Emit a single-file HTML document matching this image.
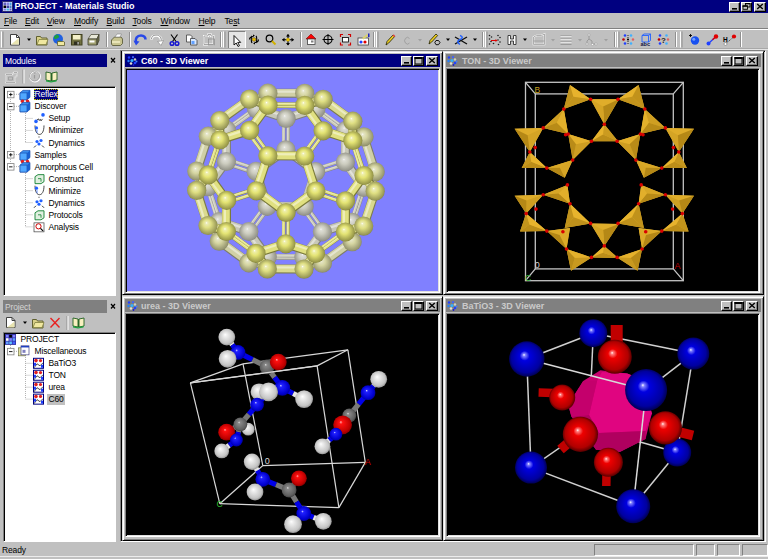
<!DOCTYPE html>
<html><head><meta charset="utf-8">
<style>
*{margin:0;padding:0;box-sizing:border-box}
html,body{width:768px;height:559px;overflow:hidden;background:#c0c0c0;font-family:"Liberation Sans",sans-serif;font-size:8.5px;color:#000;position:relative}
.a{position:absolute}
.t{position:absolute;white-space:nowrap;font-size:8.5px;letter-spacing:-0.15px;line-height:10px}
.btn{position:absolute;background:#c0c0c0;border-top:1px solid #fff;border-left:1px solid #fff;border-right:1px solid #000;border-bottom:1px solid #000;box-shadow:inset -1px -1px 0 #808080}
.win{position:absolute;background:#c0c0c0;border-top:1px solid #dfdfdf;border-left:1px solid #dfdfdf;border-right:1px solid #000;border-bottom:1px solid #000;box-shadow:inset 1px 1px 0 #fff,inset -1px -1px 0 #808080}
.wt{position:absolute;height:13px;color:#fff;font-weight:bold;font-size:9px;line-height:13px;white-space:nowrap}
.wt span{position:absolute;left:16px;top:0.6px}
.vp{position:absolute;overflow:hidden;border-top:1px solid #808080;border-left:1px solid #808080;border-right:1px solid #fff;border-bottom:1px solid #fff;box-shadow:inset 1px 1px 0 #000,inset -1px -1px 0 #dfdfdf}
.sep{position:absolute;width:2px;border-left:1px solid #808080;border-right:1px solid #fff}
.grip{position:absolute;width:3px;border-left:1px solid #fff;border-top:1px solid #fff;border-right:1px solid #808080;border-bottom:1px solid #808080}
.u{text-decoration:underline}
.pane{position:absolute;top:544px;height:12px;border-top:1px solid #808080;border-left:1px solid #808080;border-right:1px solid #fff;border-bottom:1px solid #fff}
</style></head><body>
<!-- title bar -->
<div class="a" style="left:0;top:0;width:768px;height:13px;background:#000080"></div>
<svg class="a" style="left:2px;top:1px" width="11" height="11" viewBox="0 0 11 11">
<rect x="0" y="0" width="11" height="11" fill="#e0e0ff"/><rect x="0.5" y="0.5" width="10" height="10" fill="none" stroke="#303070"/>
<g>
<rect x="1.5" y="1.5" width="2.5" height="2.5" fill="#6060c0"/><rect x="4.5" y="1.5" width="2.5" height="2.5" fill="#8080e0"/><rect x="7.5" y="1.5" width="2" height="2.5" fill="#40a0e0"/>
<rect x="1.5" y="4.5" width="2.5" height="2.5" fill="#000"/><rect x="4.5" y="4.5" width="2.5" height="2.5" fill="#4040a0"/><rect x="7.5" y="4.5" width="2" height="2.5" fill="#4080c0"/>
<rect x="1.5" y="7.5" width="2.5" height="2" fill="#8080e0"/><rect x="4.5" y="7.5" width="2.5" height="2" fill="#40c0e0"/><rect x="7.5" y="7.5" width="2" height="2" fill="#6060c0"/>
</g></svg>
<div class="t" style="left:14.5px;top:0.8px;color:#fff;font-weight:bold;font-size:9px;letter-spacing:0">PROJECT - Materials Studio</div>
<div class="btn" style="left:729px;top:2px;width:11px;height:10px"></div><svg class="a" style="left:729px;top:2px" width="11" height="10" viewBox="0 0 11 10"><rect x="3.0" y="6" width="5" height="1.6" fill="#000"/></svg><div class="btn" style="left:741px;top:2px;width:11px;height:10px"></div><svg class="a" style="left:741px;top:2px" width="11" height="10" viewBox="0 0 11 10"><rect x="4.5" y="1.5" width="4.5" height="3.5" fill="none" stroke="#000" stroke-width="0.9"/><rect x="4.0" y="1" width="5" height="1.3" fill="#000"/><rect x="2.0" y="3.8" width="4.5" height="3.5" fill="#c0c0c0" stroke="#000" stroke-width="0.9"/><rect x="1.5" y="3.5" width="5" height="1.3" fill="#000"/></svg><div class="btn" style="left:754px;top:2px;width:12px;height:10px"></div><svg class="a" style="left:754px;top:2px" width="12" height="10" viewBox="0 0 12 10"><path d="M3.2 2L8.8 7M8.8 2L3.2 7" stroke="#000" stroke-width="1.4"/></svg>
<!-- menu -->
<div class="t" style="left:4px;top:15.9px"><span class="u">F</span>ile</div>
<div class="t" style="left:25px;top:15.9px"><span class="u">E</span>dit</div>
<div class="t" style="left:47px;top:15.9px"><span class="u">V</span>iew</div>
<div class="t" style="left:74px;top:15.9px"><span class="u">M</span>odify</div>
<div class="t" style="left:106.5px;top:15.9px"><span class="u">B</span>uild</div>
<div class="t" style="left:132.5px;top:15.9px"><span class="u">T</span>ools</div>
<div class="t" style="left:160.5px;top:15.9px"><span class="u">W</span>indow</div>
<div class="t" style="left:198.5px;top:15.9px"><span class="u">H</span>elp</div>
<div class="t" style="left:224.5px;top:15.9px">Te<span class="u">s</span>t</div>
<div class="a" style="left:0;top:28px;width:768px;height:1px;background:#808080"></div>
<div class="a" style="left:0;top:29px;width:768px;height:1px;background:#fff"></div>
<svg class="a" style="left:0;top:0" width="768" height="52" viewBox="0 0 768 52"><rect x="1" y="31.5" width="1" height="16" fill="#fff"/><rect x="2.5" y="31.5" width="1" height="16" fill="#909090"/><path d="M10.5 34.5h6l3 3v7.5h-9z" fill="#fff" stroke="#404040" stroke-width="1"/><path d="M11 44.5l7.8-6.5v6.5z" fill="#e8e4b0"/><path d="M16.5 34.5v3h3" fill="none" stroke="#404040"/><path d="M27 38.5h4l-2 2.5z" fill="#000"/><path d="M36.5 36.5h4l1 1.5h5.5v7h-10.5z" fill="#d8d088" stroke="#606030"/><path d="M37 44.5l2-5h9l-2 5z" fill="#f0e8a0" stroke="#808040" stroke-width="0.8"/><circle cx="58" cy="39" r="5" fill="#2060e0"/><path d="M54 37c1-2 3-3 4-2s2 2 0 3-3 2-4 0z" fill="#20a040"/><path d="M58 41c2-1 4 0 3 2s-3 1-3-2z" fill="#20a040"/><path d="M57.5 41.5h6l1.5 1.2h-0.5v2.8h-7z" fill="#f0e8a0" stroke="#606030" stroke-width="0.8"/><rect x="71.5" y="34.5" width="10.5" height="10.5" fill="#707040" stroke="#404020"/><rect x="73" y="35" width="7.5" height="4.5" fill="#f4f0c8"/><rect x="74" y="41.5" width="5.5" height="3.5" fill="#303020"/><rect x="77.5" y="42" width="1.2" height="2.5" fill="#d0d0d0"/><path d="M88 39l3-4.5h8l-2 4.5z" fill="#e8e8d8" stroke="#505040" stroke-width="0.8"/><path d="M88 39h9v6h-9z" fill="#a0a070" stroke="#404030" stroke-width="0.8"/><path d="M97 39l2-4.5v6l-2 4.5z" fill="#707048" stroke="#404030" stroke-width="0.8"/><rect x="89.5" y="40.5" width="5" height="2" fill="#fff"/><rect x="106" y="32" width="1" height="15" fill="#909090"/><rect x="107" y="32" width="1" height="15" fill="#fff"/><path d="M111.5 40l3-3h6.5l1.5 2v4.5l-2 2h-8l-1-1.5z" fill="#c8c490" stroke="#505030" stroke-width="0.8"/><path d="M115 37l2-3h4.5l-1.5 3z" fill="#fff" stroke="#808080" stroke-width="0.6"/><path d="M112 41h8v2h-8z" fill="#e8e4b8"/><rect x="129" y="32" width="1" height="15" fill="#909090"/><rect x="130" y="32" width="1" height="15" fill="#fff"/><path d="M136 42.5c-1-4 1-7 5-7 3 0 4.5 2 4.5 4" fill="none" stroke="#2848e8" stroke-width="2.6"/><path d="M133.5 40.5l2.5 5 3.5-4z" fill="#2848e8"/><path d="M161 42.5c1-4-1-7-5-7-3 0-4.5 2-4.5 4" fill="none" stroke="#fff" stroke-width="2.6"/><path d="M161 42c1-4-1-7-5-7-3 0-4.5 2-4.5 4" fill="none" stroke="#909090" stroke-width="1"/><path d="M163.5 40.5l-2.5 5-3.5-4z" fill="#fff" stroke="#909090" stroke-width="0.7"/><path d="M171 34.5l5 7M177.5 34.5l-5 7" stroke="#000" stroke-width="1.1"/><circle cx="172" cy="43.5" r="1.8" fill="none" stroke="#1818d0" stroke-width="1.5"/><circle cx="177" cy="43.5" r="1.8" fill="none" stroke="#1818d0" stroke-width="1.5"/><path d="M186.5 35h4l1.5 1.5v5.5h-5.5z" fill="#fff" stroke="#404040" stroke-width="0.8"/><path d="M190.5 38.5h4.5l2 2v4.5h-6.5z" fill="#d8e8ff" stroke="#404040" stroke-width="0.8"/><rect x="191.5" y="41" width="3" height="3" fill="#60a0ff"/><path d="M204 36h4v-1.5h3v1.5h2.5v8.5h-9.5z" fill="none" stroke="#fff" stroke-width="1.8"/><path d="M204 36h4v-1.5h3v1.5h2.5v8.5h-9.5z" fill="none" stroke="#909090" stroke-width="0.8"/><rect x="208.5" y="39" width="6" height="6" fill="none" stroke="#909090" stroke-width="0.8"/><rect x="220" y="32" width="1" height="15" fill="#909090"/><rect x="221" y="32" width="1" height="15" fill="#fff"/><rect x="223" y="31.5" width="1" height="16" fill="#fff"/><rect x="224.5" y="31.5" width="1" height="16" fill="#909090"/><rect x="228" y="31.5" width="17" height="17" fill="#e4e4e4"/><path d="M228.5 48.5v-17h17" fill="none" stroke="#808080"/><path d="M228.5 48.5h17v-17" fill="none" stroke="#fff"/><path d="M234 35.5v9.5l2.2-2 1.8 3.5 1.5-.8-1.8-3.3h3z" fill="#fff" stroke="#000" stroke-width="0.9" stroke-linejoin="round"/><path d="M249.5 39.5c0-2 2-3 4-3M258.5 39.5c0 2-2 3-4 3M252 36c-1 1-1 5 0 7M256 36c1 1 1 5 0 7" fill="none" stroke="#000" stroke-width="1.1"/><circle cx="254" cy="39.5" r="1.8" fill="#e8c000" stroke="#604000" stroke-width="0.5"/><path d="M253 34.5l2 1-2 1z M255 44.5l-2-1 2-1z" fill="#000"/><circle cx="269.5" cy="38.5" r="3.3" fill="none" stroke="#000" stroke-width="1.2"/><path d="M272 41l3.5 3.5" stroke="#d0b000" stroke-width="2"/><path d="M288 34.5v10.5M282.5 39.8h11" stroke="#000" stroke-width="1.1"/><path d="M288 34l-2 2.5h4zM288 45.5l-2-2.5h4zM282 39.8l2.5-2v4zM294 39.8l-2.5-2v4z" fill="#000"/><circle cx="288" cy="39.8" r="1.8" fill="#e8c000"/><rect x="300" y="32" width="1" height="15" fill="#909090"/><rect x="301" y="32" width="1" height="15" fill="#fff"/><path d="M306 39l5-5 5 5z" fill="#ff0000" stroke="#800000" stroke-width="0.6"/><rect x="307.5" y="39" width="7.5" height="5.5" fill="#fff" stroke="#404040" stroke-width="0.8"/><rect x="311" y="40.5" width="2.5" height="2" fill="#808080"/><circle cx="328" cy="39.5" r="4" fill="none" stroke="#000" stroke-width="1.1"/><path d="M328 34v11M322.5 39.5h11" stroke="#000" stroke-width="1"/><path d="M340.5 37v-2.5h2.5M348 34.5h2.5v2.5M350.5 42.5v2.5h-2.5M343 45h-2.5v-2.5" fill="none" stroke="#d00000" stroke-width="1.2"/><rect x="342.5" y="37.5" width="6" height="4.5" fill="#fff" stroke="#000" stroke-width="0.8"/><rect x="358" y="38" width="10.5" height="7" fill="#fff" stroke="#404040" stroke-width="0.8"/><circle cx="361" cy="42" r="1.6" fill="#2040ff"/><circle cx="365" cy="42" r="1.6" fill="#e00000"/><path d="M362 38l5-4 1.5 1.5-5 4z" fill="#d8d070"/><rect x="368" y="33.5" width="1.5" height="3.5" fill="#2020c0"/><rect x="373" y="32" width="1" height="15" fill="#909090"/><rect x="374" y="32" width="1" height="15" fill="#fff"/><rect x="376" y="31.5" width="1" height="16" fill="#fff"/><rect x="377.5" y="31.5" width="1" height="16" fill="#909090"/><path d="M386 45l1-3.5 6-6.5 1.6 1.6-6 6.5z" fill="#f0d020" stroke="#202000" stroke-width="0.8"/><path d="M392.5 35.5l1.2-1.2 1.6 1.6-1.2 1.2z" fill="#e04040"/><path d="M409.5 38.5a2.8 3.3 0 1 0 0 4.5" fill="none" stroke="#a0a0a0" stroke-width="1"/><path d="M418 39h4l-2 2.5z" fill="#a0a0a0"/><path d="M429 44l1-3.5 6-6.5 1.6 1.6-6 6.5z" fill="#f0d020" stroke="#202000" stroke-width="0.8"/><path d="M436 40.5l2.5 0 1.5 2-1.5 2.2h-2.5l-1.2-2.2z" fill="none" stroke="#000" stroke-width="0.9"/><path d="M446 38.5h4l-2 2.5z" fill="#000"/><path d="M455 37l12 7M455 44l12-7" stroke="#101010" stroke-width="1.4"/><path d="M460 35.5c3 1 3 3 0 4s-3 3 0 5" fill="none" stroke="#2060ff" stroke-width="1.5"/><path d="M473 38.5h4l-2 2.5z" fill="#000"/><rect x="482" y="32" width="1" height="15" fill="#909090"/><rect x="483" y="32" width="1" height="15" fill="#fff"/><rect x="485" y="31.5" width="1" height="16" fill="#fff"/><rect x="486.5" y="31.5" width="1" height="16" fill="#909090"/><g fill="#202020"><circle cx="489.5" cy="35.5" r=".8"/><circle cx="491.5" cy="37" r=".8"/><circle cx="489.5" cy="39" r=".8"/><circle cx="491" cy="41.5" r=".8"/><circle cx="489.5" cy="44" r=".8"/><circle cx="498" cy="35.5" r=".8"/><circle cx="500" cy="37.5" r=".8"/><circle cx="498" cy="40" r=".8"/><circle cx="500" cy="42" r=".8"/><circle cx="498.5" cy="44.5" r=".8"/><circle cx="493.5" cy="43.5" r=".8"/></g><path d="M491 40.5h5" stroke="#e00000" stroke-width="1"/><path d="M495.5 39l2 1.5-2 1.5z" fill="#e00000"/><path d="M508 35.5h2.5v3.5h3v-3.5h2.5v9h-2.5v-3.5h-3v3.5h-2.5z" fill="#fff" stroke="#303030" stroke-width="0.9"/><path d="M523 38.5h4l-2 2.5z" fill="#000"/><path d="M533.5 37l3-1.5h5l3-1.5v10.5h-11z" fill="none" stroke="#fff" stroke-width="1.6"/><path d="M533.5 37l3-1.5h5l3-1.5v10.5h-11zM533.5 41h11" fill="none" stroke="#9a9a9a" stroke-width="0.8"/><path d="M551 39h4l-2 2.5z" fill="#a0a0a0"/><path d="M560.5 35.5h11M560.5 38.5h11M560.5 41.5h11M560.5 44.5h11" stroke="#9a9a9a" stroke-width="1"/><path d="M560.5 36.3h11M560.5 39.3h11M560.5 42.3h11" stroke="#fff" stroke-width="0.7"/><path d="M578 39h4l-2 2.5z" fill="#a0a0a0"/><path d="M589 35v4M589 39l-2 2M589 39l3 2M592 41v3M592 44l3 0M587 41v3" fill="none" stroke="#9a9a9a" stroke-width="1"/><g fill="#fff" stroke="#9a9a9a" stroke-width=".6"><circle cx="589" cy="35" r="1.1"/><circle cx="587" cy="44" r="1.1"/><circle cx="592.5" cy="44.5" r="1.1"/><circle cx="596" cy="44" r="1.1"/></g><path d="M604 39h4l-2 2.5z" fill="#a0a0a0"/><rect x="614" y="32" width="1" height="15" fill="#909090"/><rect x="615" y="32" width="1" height="15" fill="#fff"/><rect x="617" y="31.5" width="1" height="16" fill="#fff"/><rect x="618.5" y="31.5" width="1" height="16" fill="#909090"/><g><circle cx="625" cy="35.5" r="1.3" fill="#2040ff"/><circle cx="631" cy="35.5" r="1.3" fill="#40b0ff"/><circle cx="623.5" cy="39.5" r="1.3" fill="#c00000"/><circle cx="628" cy="39.5" r="1" fill="#000"/><circle cx="633" cy="39.5" r="1.2" fill="#e06060"/><circle cx="625" cy="43.5" r="1.3" fill="#2040ff"/><circle cx="631" cy="43.5" r="1.3" fill="#40b0ff"/><path d="M628 35v9" stroke="#000" stroke-width=".8" stroke-dasharray="1 1"/></g><path d="M642 35.5h6.5v6.5h-6.5zM644 34h6.5v6.5M650.5 34l-2 1.5M644 34l-2 1.5M650.5 40.5l-2 1.5" fill="none" stroke="#2060ff" stroke-width="0.9"/><text x="640.5" y="46" font-family="Liberation Sans" font-size="5.5" font-weight="bold" fill="#101040">abc</text><g><circle cx="660" cy="35.5" r="1.3" fill="#2040ff"/><circle cx="666.5" cy="35.5" r="1.3" fill="#40b0ff"/><circle cx="659" cy="39.5" r="1.3" fill="#c00000"/><circle cx="668" cy="39.5" r="1.2" fill="#e06060"/><circle cx="660" cy="43.5" r="1.3" fill="#2040ff"/><circle cx="666.5" cy="43.5" r="1.3" fill="#40b0ff"/></g><text x="661" y="43" font-family="Liberation Sans" font-size="8" font-weight="bold" fill="#202020">?</text><rect x="675" y="32" width="1" height="15" fill="#909090"/><rect x="676" y="32" width="1" height="15" fill="#fff"/><rect x="680" y="31.5" width="1" height="16" fill="#fff"/><rect x="681.5" y="31.5" width="1" height="16" fill="#909090"/><circle cx="695" cy="40.5" r="4.2" fill="#1850f0"/><circle cx="693.8" cy="39.2" r="1.5" fill="#70a0ff"/><path d="M689 35.5h3M690.5 34v3" stroke="#000" stroke-width="0.9"/><path d="M708.5 43.5l7.5-7" stroke="#2040ff" stroke-width="1.3"/><path d="M712.5 39.8l3.5-3.3" stroke="#e00000" stroke-width="1.3"/><circle cx="708.5" cy="43.5" r="2" fill="#2040ff"/><circle cx="716" cy="36.5" r="2.2" fill="#e00000"/><text x="723" y="41.5" font-family="Liberation Sans" font-size="6.5" font-weight="bold" fill="#000">H</text><path d="M726 43.5l7.5-6.5" stroke="#404040" stroke-width="0.9" stroke-dasharray="1.2 .8"/><circle cx="725.5" cy="44" r="1.5" fill="#fff" stroke="#606060" stroke-width=".5"/><circle cx="734" cy="36.5" r="2.1" fill="#e00000"/><rect x="740" y="32" width="1" height="15" fill="#909090"/><rect x="741" y="32" width="1" height="15" fill="#fff"/></svg>
<div class="a" style="left:0;top:48px;width:768px;height:1px;background:#a8a8a8"></div>
<div class="a" style="left:0;top:49px;width:768px;height:1px;background:#e4e4e4"></div>
<!-- MDI client border -->
<div class="a" style="left:120px;top:50px;width:646px;height:492px;border-top:1px solid #808080;border-left:1px solid #808080;border-right:1px solid #fff;border-bottom:1px solid #fff;box-shadow:inset 1px 1px 0 #000"></div>
<!-- MDI windows -->
<div class="win" style="left:122px;top:51px;width:321px;height:244px"></div>
<div class="wt" style="left:125px;top:54px;width:315px;background:#000080"><span>C60 - 3D Viewer</span></div>
<div class="vp" style="left:125px;top:68px;width:315px;height:225px;background:#8080ff"><svg class="a" style="left:1px;top:1px" width="313" height="223" viewBox="126 69 313 223"><defs><radialGradient id="g0" cx="0.5" cy="0.5" fx="0.42" fy="0.36" r="0.6"><stop offset="0" stop-color="#f8f8f8"/><stop offset="0.1" stop-color="#deded6"/><stop offset="0.35" stop-color="#cdcdc0"/><stop offset="0.8" stop-color="#95958a"/><stop offset="1" stop-color="#68685e"/></radialGradient><radialGradient id="g1" cx="0.5" cy="0.5" fx="0.42" fy="0.36" r="0.6"><stop offset="0" stop-color="#f9f9f9"/><stop offset="0.1" stop-color="#e2e2ce"/><stop offset="0.35" stop-color="#d2d2b1"/><stop offset="0.8" stop-color="#97977d"/><stop offset="1" stop-color="#666653"/></radialGradient><radialGradient id="g2" cx="0.5" cy="0.5" fx="0.42" fy="0.36" r="0.6"><stop offset="0" stop-color="#fbfbfb"/><stop offset="0.1" stop-color="#e5e5c6"/><stop offset="0.35" stop-color="#d6d6a2"/><stop offset="0.8" stop-color="#979770"/><stop offset="1" stop-color="#636348"/></radialGradient><radialGradient id="g3" cx="0.5" cy="0.5" fx="0.42" fy="0.36" r="0.6"><stop offset="0" stop-color="#fcfcfc"/><stop offset="0.1" stop-color="#e8e8bc"/><stop offset="0.35" stop-color="#dbdb92"/><stop offset="0.8" stop-color="#989864"/><stop offset="1" stop-color="#61613e"/></radialGradient><radialGradient id="g4" cx="0.5" cy="0.5" fx="0.42" fy="0.36" r="0.6"><stop offset="0" stop-color="#fefefe"/><stop offset="0.1" stop-color="#ebebb4"/><stop offset="0.35" stop-color="#dfdf83"/><stop offset="0.8" stop-color="#989857"/><stop offset="1" stop-color="#5e5e33"/></radialGradient><radialGradient id="g5" cx="0.5" cy="0.5" fx="0.42" fy="0.36" r="0.6"><stop offset="0" stop-color="#ffffff"/><stop offset="0.1" stop-color="#efefac"/><stop offset="0.35" stop-color="#e4e474"/><stop offset="0.8" stop-color="#99994a"/><stop offset="1" stop-color="#5c5c28"/></radialGradient></defs><line x1="319.6" y1="232.1" x2="301.2" y2="206.7" stroke="#80807a" stroke-width="3.3"/><line x1="319.4" y1="232.2" x2="301.1" y2="206.8" stroke="#c8c8b8" stroke-width="2.8"/><line x1="319.1" y1="232.5" x2="300.7" y2="207.1" stroke="#e1e1d8" stroke-width="0.8"/><line x1="323.2" y1="229.5" x2="304.9" y2="204.1" stroke="#80807a" stroke-width="3.3"/><line x1="323.1" y1="229.6" x2="304.7" y2="204.2" stroke="#c8c8b8" stroke-width="2.8"/><line x1="322.7" y1="229.9" x2="304.4" y2="204.5" stroke="#e1e1d8" stroke-width="0.8"/><line x1="314.6" y1="170.5" x2="303.1" y2="205.4" stroke="#80807a" stroke-width="9.0"/><line x1="314.1" y1="170.4" x2="302.6" y2="205.3" stroke="#c8c8b8" stroke-width="7.6"/><line x1="313.0" y1="170.0" x2="301.5" y2="204.9" stroke="#e1e1d8" stroke-width="2.2"/><line x1="303.1" y1="205.4" x2="266.3" y2="205.3" stroke="#80807a" stroke-width="9.0"/><line x1="303.1" y1="205.0" x2="266.3" y2="204.8" stroke="#c8c8b8" stroke-width="7.6"/><line x1="303.1" y1="203.8" x2="266.3" y2="203.7" stroke="#e1e1d8" stroke-width="2.2"/><line x1="343.7" y1="158.8" x2="313.9" y2="168.4" stroke="#80807a" stroke-width="3.3"/><line x1="343.7" y1="158.7" x2="313.8" y2="168.2" stroke="#c8c8b8" stroke-width="2.8"/><line x1="343.5" y1="158.3" x2="313.7" y2="167.8" stroke="#e1e1d8" stroke-width="0.8"/><line x1="345.1" y1="163.1" x2="315.2" y2="172.7" stroke="#80807a" stroke-width="3.3"/><line x1="345.0" y1="163.0" x2="315.2" y2="172.5" stroke="#c8c8b8" stroke-width="2.8"/><line x1="344.9" y1="162.6" x2="315.1" y2="172.1" stroke="#e1e1d8" stroke-width="0.8"/><line x1="314.6" y1="170.5" x2="284.9" y2="148.8" stroke="#80807a" stroke-width="9.0"/><line x1="314.8" y1="170.1" x2="285.2" y2="148.4" stroke="#c8c8b8" stroke-width="7.6"/><line x1="315.5" y1="169.2" x2="285.9" y2="147.5" stroke="#e1e1d8" stroke-width="2.2"/><line x1="266.3" y1="205.3" x2="255.1" y2="170.3" stroke="#80807a" stroke-width="9.0"/><line x1="265.9" y1="205.4" x2="254.6" y2="170.4" stroke="#c8c8b8" stroke-width="7.6"/><line x1="264.7" y1="205.8" x2="253.5" y2="170.8" stroke="#e1e1d8" stroke-width="2.2"/><line x1="264.5" y1="203.9" x2="246.0" y2="229.2" stroke="#80807a" stroke-width="3.3"/><line x1="264.3" y1="203.8" x2="245.9" y2="229.1" stroke="#c8c8b8" stroke-width="2.8"/><line x1="264.0" y1="203.6" x2="245.5" y2="228.8" stroke="#e1e1d8" stroke-width="0.8"/><line x1="268.1" y1="206.6" x2="249.7" y2="231.8" stroke="#80807a" stroke-width="3.3"/><line x1="268.0" y1="206.5" x2="249.5" y2="231.8" stroke="#c8c8b8" stroke-width="2.8"/><line x1="267.6" y1="206.3" x2="249.2" y2="231.5" stroke="#e1e1d8" stroke-width="0.8"/><line x1="282.7" y1="148.8" x2="282.8" y2="117.5" stroke="#80807a" stroke-width="3.3"/><line x1="282.5" y1="148.8" x2="282.7" y2="117.5" stroke="#c8c8b8" stroke-width="2.8"/><line x1="282.1" y1="148.8" x2="282.2" y2="117.5" stroke="#e1e1d8" stroke-width="0.8"/><line x1="287.2" y1="148.8" x2="287.3" y2="117.5" stroke="#80807a" stroke-width="3.3"/><line x1="287.0" y1="148.8" x2="287.2" y2="117.5" stroke="#c8c8b8" stroke-width="2.8"/><line x1="286.6" y1="148.8" x2="286.7" y2="117.5" stroke="#e1e1d8" stroke-width="0.8"/><line x1="284.9" y1="148.8" x2="255.1" y2="170.3" stroke="#80807a" stroke-width="9.0"/><line x1="284.6" y1="148.4" x2="254.8" y2="169.9" stroke="#c8c8b8" stroke-width="7.6"/><line x1="284.0" y1="147.5" x2="254.1" y2="168.9" stroke="#e1e1d8" stroke-width="2.2"/><line x1="255.8" y1="168.1" x2="226.1" y2="158.4" stroke="#80807a" stroke-width="3.3"/><line x1="255.8" y1="168.0" x2="226.2" y2="158.2" stroke="#c8c8b8" stroke-width="2.8"/><line x1="256.0" y1="167.6" x2="226.3" y2="157.8" stroke="#e1e1d8" stroke-width="0.8"/><line x1="254.4" y1="172.4" x2="224.7" y2="162.6" stroke="#80807a" stroke-width="3.3"/><line x1="254.4" y1="172.2" x2="224.8" y2="162.5" stroke="#c8c8b8" stroke-width="2.8"/><line x1="254.6" y1="171.8" x2="224.9" y2="162.1" stroke="#e1e1d8" stroke-width="0.8"/><circle cx="303.1" cy="205.4" r="9.6" fill="url(#g0)"/><circle cx="314.6" cy="170.5" r="9.6" fill="url(#g0)"/><circle cx="266.3" cy="205.3" r="9.6" fill="url(#g0)"/><circle cx="284.9" cy="148.8" r="9.6" fill="url(#g0)"/><circle cx="255.1" cy="170.3" r="9.6" fill="url(#g0)"/><line x1="351.2" y1="221.3" x2="321.4" y2="230.8" stroke="#80807a" stroke-width="9.0"/><line x1="351.1" y1="220.9" x2="321.2" y2="230.4" stroke="#c8c8b8" stroke-width="7.6"/><line x1="350.7" y1="219.8" x2="320.9" y2="229.3" stroke="#e1e1d8" stroke-width="2.2"/><line x1="321.4" y1="230.8" x2="302.9" y2="256.1" stroke="#80807a" stroke-width="9.0"/><line x1="321.0" y1="230.6" x2="302.6" y2="255.8" stroke="#c8c8b8" stroke-width="7.6"/><line x1="320.1" y1="229.9" x2="301.6" y2="255.1" stroke="#e1e1d8" stroke-width="2.2"/><line x1="362.7" y1="186.4" x2="344.4" y2="161.0" stroke="#80807a" stroke-width="9.0"/><line x1="362.4" y1="186.7" x2="344.0" y2="161.3" stroke="#c8c8b8" stroke-width="7.6"/><line x1="361.4" y1="187.3" x2="343.1" y2="161.9" stroke="#e1e1d8" stroke-width="2.2"/><line x1="344.4" y1="161.0" x2="344.6" y2="129.7" stroke="#80807a" stroke-width="9.0"/><line x1="343.9" y1="161.0" x2="344.1" y2="129.7" stroke="#c8c8b8" stroke-width="7.6"/><line x1="342.8" y1="161.0" x2="343.0" y2="129.7" stroke="#e1e1d8" stroke-width="2.2"/><line x1="266.2" y1="255.9" x2="247.8" y2="230.5" stroke="#80807a" stroke-width="9.0"/><line x1="265.8" y1="256.2" x2="247.5" y2="230.8" stroke="#c8c8b8" stroke-width="7.6"/><line x1="264.9" y1="256.9" x2="246.5" y2="231.5" stroke="#e1e1d8" stroke-width="2.2"/><line x1="247.8" y1="230.5" x2="218.2" y2="220.7" stroke="#80807a" stroke-width="9.0"/><line x1="248.0" y1="230.1" x2="218.3" y2="220.3" stroke="#c8c8b8" stroke-width="7.6"/><line x1="248.4" y1="229.0" x2="218.7" y2="219.2" stroke="#e1e1d8" stroke-width="2.2"/><line x1="314.9" y1="108.0" x2="285.1" y2="117.5" stroke="#80807a" stroke-width="9.0"/><line x1="314.8" y1="107.6" x2="285.0" y2="117.1" stroke="#c8c8b8" stroke-width="7.6"/><line x1="314.4" y1="106.5" x2="284.6" y2="116.0" stroke="#e1e1d8" stroke-width="2.2"/><line x1="285.1" y1="117.5" x2="255.4" y2="107.7" stroke="#80807a" stroke-width="9.0"/><line x1="285.2" y1="117.1" x2="255.6" y2="107.3" stroke="#c8c8b8" stroke-width="7.6"/><line x1="285.6" y1="116.0" x2="255.9" y2="106.2" stroke="#e1e1d8" stroke-width="2.2"/><line x1="225.4" y1="160.5" x2="225.6" y2="129.2" stroke="#80807a" stroke-width="9.0"/><line x1="225.0" y1="160.5" x2="225.1" y2="129.2" stroke="#c8c8b8" stroke-width="7.6"/><line x1="223.8" y1="160.5" x2="224.0" y2="129.2" stroke="#e1e1d8" stroke-width="2.2"/><line x1="225.4" y1="160.5" x2="207.0" y2="185.7" stroke="#80807a" stroke-width="9.0"/><line x1="225.1" y1="160.2" x2="206.6" y2="185.5" stroke="#c8c8b8" stroke-width="7.6"/><line x1="224.1" y1="159.5" x2="205.7" y2="184.8" stroke="#e1e1d8" stroke-width="2.2"/><circle cx="321.4" cy="230.8" r="9.6" fill="url(#g0)"/><circle cx="344.4" cy="161.0" r="9.6" fill="url(#g0)"/><circle cx="247.8" cy="230.5" r="9.6" fill="url(#g0)"/><circle cx="285.1" cy="117.5" r="9.6" fill="url(#g0)"/><circle cx="225.4" cy="160.5" r="9.6" fill="url(#g0)"/><line x1="363.8" y1="186.8" x2="352.3" y2="221.7" stroke="#80807a" stroke-width="3.3"/><line x1="363.7" y1="186.7" x2="352.2" y2="221.6" stroke="#c8c8b8" stroke-width="2.8"/><line x1="363.3" y1="186.6" x2="351.8" y2="221.5" stroke="#e1e1d8" stroke-width="0.8"/><line x1="361.6" y1="186.0" x2="350.1" y2="220.9" stroke="#80807a" stroke-width="3.3"/><line x1="361.4" y1="186.0" x2="349.9" y2="220.9" stroke="#c8c8b8" stroke-width="2.8"/><line x1="361.0" y1="185.8" x2="349.5" y2="220.8" stroke="#e1e1d8" stroke-width="0.8"/><line x1="351.2" y1="221.3" x2="351.2" y2="240.7" stroke="#7f7f72" stroke-width="9.0"/><line x1="350.8" y1="221.3" x2="350.8" y2="240.7" stroke="#cbcbb1" stroke-width="7.6"/><line x1="349.6" y1="221.3" x2="349.6" y2="240.7" stroke="#e2e2d4" stroke-width="2.2"/><line x1="374.2" y1="170.8" x2="362.7" y2="186.4" stroke="#7f7f72" stroke-width="9.0"/><line x1="373.9" y1="170.6" x2="362.4" y2="186.1" stroke="#cbcbb1" stroke-width="7.6"/><line x1="372.9" y1="169.9" x2="361.4" y2="185.4" stroke="#e2e2d4" stroke-width="2.2"/><line x1="321.4" y1="262.2" x2="302.9" y2="256.1" stroke="#7f7f72" stroke-width="9.0"/><line x1="321.5" y1="261.7" x2="303.1" y2="255.6" stroke="#cbcbb1" stroke-width="7.6"/><line x1="321.9" y1="260.6" x2="303.4" y2="254.5" stroke="#e2e2d4" stroke-width="2.2"/><line x1="302.9" y1="257.3" x2="266.2" y2="257.1" stroke="#80807a" stroke-width="3.3"/><line x1="302.9" y1="257.1" x2="266.2" y2="256.9" stroke="#c8c8b8" stroke-width="2.8"/><line x1="302.9" y1="256.7" x2="266.2" y2="256.5" stroke="#e1e1d8" stroke-width="0.8"/><line x1="302.9" y1="254.9" x2="266.2" y2="254.7" stroke="#80807a" stroke-width="3.3"/><line x1="302.9" y1="254.7" x2="266.2" y2="254.6" stroke="#c8c8b8" stroke-width="2.8"/><line x1="302.9" y1="254.3" x2="266.2" y2="254.1" stroke="#e1e1d8" stroke-width="0.8"/><line x1="363.0" y1="135.8" x2="344.6" y2="129.7" stroke="#7f7f72" stroke-width="9.0"/><line x1="363.2" y1="135.4" x2="344.7" y2="129.3" stroke="#cbcbb1" stroke-width="7.6"/><line x1="363.5" y1="134.3" x2="345.1" y2="128.2" stroke="#e2e2d4" stroke-width="2.2"/><line x1="345.3" y1="128.8" x2="315.6" y2="107.0" stroke="#80807a" stroke-width="3.3"/><line x1="345.4" y1="128.7" x2="315.7" y2="106.9" stroke="#c8c8b8" stroke-width="2.8"/><line x1="345.6" y1="128.3" x2="316.0" y2="106.6" stroke="#e1e1d8" stroke-width="0.8"/><line x1="343.9" y1="130.7" x2="314.2" y2="109.0" stroke="#80807a" stroke-width="3.3"/><line x1="344.0" y1="130.6" x2="314.3" y2="108.8" stroke="#c8c8b8" stroke-width="2.8"/><line x1="344.2" y1="130.2" x2="314.6" y2="108.5" stroke="#e1e1d8" stroke-width="0.8"/><line x1="266.2" y1="255.9" x2="247.8" y2="261.8" stroke="#7f7f72" stroke-width="9.0"/><line x1="266.0" y1="255.5" x2="247.7" y2="261.4" stroke="#cbcbb1" stroke-width="7.6"/><line x1="265.7" y1="254.4" x2="247.3" y2="260.3" stroke="#e2e2d4" stroke-width="2.2"/><line x1="314.9" y1="108.0" x2="303.7" y2="92.3" stroke="#7f7f72" stroke-width="9.0"/><line x1="314.6" y1="108.3" x2="303.3" y2="92.6" stroke="#cbcbb1" stroke-width="7.6"/><line x1="313.6" y1="108.9" x2="302.4" y2="93.3" stroke="#e2e2d4" stroke-width="2.2"/><line x1="218.2" y1="220.7" x2="218.2" y2="240.1" stroke="#7f7f72" stroke-width="9.0"/><line x1="217.7" y1="220.7" x2="217.7" y2="240.1" stroke="#cbcbb1" stroke-width="7.6"/><line x1="216.6" y1="220.7" x2="216.6" y2="240.1" stroke="#e2e2d4" stroke-width="2.2"/><line x1="217.1" y1="221.1" x2="205.9" y2="186.1" stroke="#80807a" stroke-width="3.3"/><line x1="216.9" y1="221.2" x2="205.7" y2="186.1" stroke="#c8c8b8" stroke-width="2.8"/><line x1="216.5" y1="221.3" x2="205.3" y2="186.3" stroke="#e1e1d8" stroke-width="0.8"/><line x1="219.3" y1="220.4" x2="208.1" y2="185.4" stroke="#80807a" stroke-width="3.3"/><line x1="219.2" y1="220.4" x2="207.9" y2="185.4" stroke="#c8c8b8" stroke-width="2.8"/><line x1="218.7" y1="220.6" x2="207.5" y2="185.6" stroke="#e1e1d8" stroke-width="0.8"/><line x1="266.9" y1="92.2" x2="255.4" y2="107.7" stroke="#7f7f72" stroke-width="9.0"/><line x1="266.6" y1="91.9" x2="255.1" y2="107.5" stroke="#cbcbb1" stroke-width="7.6"/><line x1="265.6" y1="91.2" x2="254.1" y2="106.8" stroke="#e2e2d4" stroke-width="2.2"/><line x1="254.7" y1="106.8" x2="224.9" y2="128.3" stroke="#80807a" stroke-width="3.3"/><line x1="254.7" y1="106.7" x2="224.8" y2="128.1" stroke="#c8c8b8" stroke-width="2.8"/><line x1="254.4" y1="106.3" x2="224.6" y2="127.8" stroke="#e1e1d8" stroke-width="0.8"/><line x1="256.1" y1="108.7" x2="226.3" y2="130.2" stroke="#80807a" stroke-width="3.3"/><line x1="256.0" y1="108.6" x2="226.2" y2="130.1" stroke="#c8c8b8" stroke-width="2.8"/><line x1="255.8" y1="108.2" x2="225.9" y2="129.7" stroke="#e1e1d8" stroke-width="0.8"/><line x1="207.0" y1="185.7" x2="195.8" y2="170.1" stroke="#7f7f72" stroke-width="9.0"/><line x1="206.6" y1="186.0" x2="195.4" y2="170.3" stroke="#cbcbb1" stroke-width="7.6"/><line x1="205.7" y1="186.7" x2="194.4" y2="171.0" stroke="#e2e2d4" stroke-width="2.2"/><line x1="225.6" y1="129.2" x2="207.3" y2="135.2" stroke="#7f7f72" stroke-width="9.0"/><line x1="225.5" y1="128.8" x2="207.1" y2="134.7" stroke="#cbcbb1" stroke-width="7.6"/><line x1="225.1" y1="127.7" x2="206.8" y2="133.6" stroke="#e2e2d4" stroke-width="2.2"/><circle cx="351.2" cy="221.3" r="9.6" fill="url(#g0)"/><circle cx="362.7" cy="186.4" r="9.6" fill="url(#g0)"/><circle cx="302.9" cy="256.1" r="9.6" fill="url(#g0)"/><circle cx="344.6" cy="129.7" r="9.6" fill="url(#g0)"/><circle cx="266.2" cy="255.9" r="9.6" fill="url(#g0)"/><circle cx="314.9" cy="108.0" r="9.6" fill="url(#g0)"/><circle cx="218.2" cy="220.7" r="9.6" fill="url(#g0)"/><circle cx="255.4" cy="107.7" r="9.6" fill="url(#g0)"/><circle cx="207.0" cy="185.7" r="9.6" fill="url(#g0)"/><circle cx="225.6" cy="129.2" r="9.6" fill="url(#g0)"/><line x1="361.6" y1="226.7" x2="350.1" y2="242.2" stroke="#7d7d58" stroke-width="3.3"/><line x1="361.4" y1="226.6" x2="349.9" y2="242.1" stroke="#d5d59b" stroke-width="2.8"/><line x1="361.1" y1="226.3" x2="349.6" y2="241.9" stroke="#e8e8c8" stroke-width="0.8"/><line x1="363.8" y1="223.6" x2="352.3" y2="239.1" stroke="#7d7d58" stroke-width="3.3"/><line x1="363.7" y1="223.5" x2="352.2" y2="239.0" stroke="#d5d59b" stroke-width="2.8"/><line x1="363.4" y1="223.2" x2="351.9" y2="238.8" stroke="#e8e8c8" stroke-width="0.8"/><line x1="351.2" y1="240.7" x2="321.4" y2="262.2" stroke="#7e7e65" stroke-width="9.0"/><line x1="350.9" y1="240.3" x2="321.1" y2="261.8" stroke="#d0d0a6" stroke-width="7.6"/><line x1="350.3" y1="239.4" x2="320.4" y2="260.8" stroke="#e5e5ce" stroke-width="2.2"/><line x1="374.2" y1="168.9" x2="374.2" y2="188.3" stroke="#7d7d58" stroke-width="3.3"/><line x1="374.1" y1="168.9" x2="374.1" y2="188.3" stroke="#d5d59b" stroke-width="2.8"/><line x1="373.6" y1="168.9" x2="373.6" y2="188.3" stroke="#e8e8c8" stroke-width="0.8"/><line x1="374.2" y1="172.7" x2="374.2" y2="192.1" stroke="#7d7d58" stroke-width="3.3"/><line x1="374.0" y1="172.7" x2="374.0" y2="192.1" stroke="#d5d59b" stroke-width="2.8"/><line x1="373.6" y1="172.7" x2="373.6" y2="192.1" stroke="#e8e8c8" stroke-width="0.8"/><line x1="374.2" y1="170.8" x2="363.0" y2="135.8" stroke="#7e7e65" stroke-width="9.0"/><line x1="373.8" y1="171.0" x2="362.6" y2="136.0" stroke="#d0d0a6" stroke-width="7.6"/><line x1="372.7" y1="171.3" x2="361.5" y2="136.3" stroke="#e5e5ce" stroke-width="2.2"/><line x1="323.2" y1="261.6" x2="304.9" y2="267.5" stroke="#7d7d58" stroke-width="3.3"/><line x1="323.1" y1="261.4" x2="304.8" y2="267.3" stroke="#d5d59a" stroke-width="2.8"/><line x1="323.0" y1="261.0" x2="304.7" y2="266.9" stroke="#e8e8c7" stroke-width="0.8"/><line x1="319.5" y1="262.7" x2="301.2" y2="268.7" stroke="#7d7d58" stroke-width="3.3"/><line x1="319.5" y1="262.6" x2="301.2" y2="268.5" stroke="#d5d59a" stroke-width="2.8"/><line x1="319.4" y1="262.2" x2="301.0" y2="268.1" stroke="#e8e8c7" stroke-width="0.8"/><line x1="364.1" y1="137.4" x2="352.9" y2="121.7" stroke="#7d7d58" stroke-width="3.3"/><line x1="364.0" y1="137.5" x2="352.8" y2="121.8" stroke="#d5d59a" stroke-width="2.8"/><line x1="363.6" y1="137.7" x2="352.4" y2="122.1" stroke="#e8e8c7" stroke-width="0.8"/><line x1="361.9" y1="134.3" x2="350.7" y2="118.6" stroke="#7d7d58" stroke-width="3.3"/><line x1="361.8" y1="134.4" x2="350.5" y2="118.7" stroke="#d5d59a" stroke-width="2.8"/><line x1="361.4" y1="134.6" x2="350.2" y2="119.0" stroke="#e8e8c7" stroke-width="0.8"/><line x1="264.5" y1="267.3" x2="246.0" y2="261.2" stroke="#7d7d58" stroke-width="3.3"/><line x1="264.5" y1="267.2" x2="246.1" y2="261.1" stroke="#d5d59a" stroke-width="2.8"/><line x1="264.6" y1="266.8" x2="246.2" y2="260.7" stroke="#e8e8c7" stroke-width="0.8"/><line x1="268.1" y1="268.5" x2="249.6" y2="262.4" stroke="#7d7d58" stroke-width="3.3"/><line x1="268.1" y1="268.4" x2="249.7" y2="262.3" stroke="#d5d59a" stroke-width="2.8"/><line x1="268.3" y1="268.0" x2="249.8" y2="261.9" stroke="#e8e8c7" stroke-width="0.8"/><line x1="247.8" y1="261.8" x2="218.2" y2="240.1" stroke="#7e7e65" stroke-width="9.0"/><line x1="248.1" y1="261.5" x2="218.4" y2="239.7" stroke="#d0d0a6" stroke-width="7.6"/><line x1="248.8" y1="260.5" x2="219.1" y2="238.8" stroke="#e5e5ce" stroke-width="2.2"/><line x1="320.3" y1="97.8" x2="301.9" y2="91.7" stroke="#7d7d58" stroke-width="3.3"/><line x1="320.4" y1="97.7" x2="301.9" y2="91.6" stroke="#d5d59a" stroke-width="2.8"/><line x1="320.5" y1="97.3" x2="302.1" y2="91.2" stroke="#e8e8c7" stroke-width="0.8"/><line x1="324.0" y1="99.0" x2="305.5" y2="92.9" stroke="#7d7d58" stroke-width="3.3"/><line x1="324.0" y1="98.9" x2="305.6" y2="92.8" stroke="#d5d59a" stroke-width="2.8"/><line x1="324.1" y1="98.5" x2="305.7" y2="92.4" stroke="#e8e8c7" stroke-width="0.8"/><line x1="303.7" y1="92.3" x2="266.9" y2="92.2" stroke="#7e7e65" stroke-width="9.0"/><line x1="303.7" y1="91.9" x2="266.9" y2="91.7" stroke="#d0d0a6" stroke-width="7.6"/><line x1="303.7" y1="90.7" x2="266.9" y2="90.6" stroke="#e5e5ce" stroke-width="2.2"/><line x1="219.3" y1="241.7" x2="208.1" y2="226.0" stroke="#7d7d58" stroke-width="3.3"/><line x1="219.2" y1="241.8" x2="207.9" y2="226.1" stroke="#d5d59a" stroke-width="2.8"/><line x1="218.8" y1="242.0" x2="207.6" y2="226.4" stroke="#e8e8c7" stroke-width="0.8"/><line x1="217.1" y1="238.6" x2="205.8" y2="222.9" stroke="#7d7d58" stroke-width="3.3"/><line x1="216.9" y1="238.6" x2="205.7" y2="223.0" stroke="#d5d59a" stroke-width="2.8"/><line x1="216.6" y1="238.9" x2="205.4" y2="223.2" stroke="#e8e8c7" stroke-width="0.8"/><line x1="268.8" y1="91.6" x2="250.4" y2="97.5" stroke="#7d7d58" stroke-width="3.3"/><line x1="268.7" y1="91.5" x2="250.4" y2="97.4" stroke="#d5d59a" stroke-width="2.8"/><line x1="268.6" y1="91.0" x2="250.2" y2="97.0" stroke="#e8e8c7" stroke-width="0.8"/><line x1="265.1" y1="92.8" x2="246.8" y2="98.7" stroke="#7d7d58" stroke-width="3.3"/><line x1="265.1" y1="92.6" x2="246.7" y2="98.5" stroke="#d5d59a" stroke-width="2.8"/><line x1="264.9" y1="92.2" x2="246.6" y2="98.1" stroke="#e8e8c7" stroke-width="0.8"/><line x1="207.3" y1="135.2" x2="195.8" y2="170.1" stroke="#7e7e65" stroke-width="9.0"/><line x1="206.8" y1="135.0" x2="195.3" y2="169.9" stroke="#d0d0a5" stroke-width="7.6"/><line x1="205.7" y1="134.7" x2="194.2" y2="169.6" stroke="#e5e5ce" stroke-width="2.2"/><line x1="195.8" y1="168.2" x2="195.8" y2="187.5" stroke="#7d7d58" stroke-width="3.3"/><line x1="195.6" y1="168.2" x2="195.6" y2="187.5" stroke="#d5d59a" stroke-width="2.8"/><line x1="195.2" y1="168.2" x2="195.2" y2="187.5" stroke="#e8e8c7" stroke-width="0.8"/><line x1="195.7" y1="172.0" x2="195.7" y2="191.4" stroke="#7d7d58" stroke-width="3.3"/><line x1="195.6" y1="172.0" x2="195.6" y2="191.4" stroke="#d5d59a" stroke-width="2.8"/><line x1="195.1" y1="172.0" x2="195.1" y2="191.4" stroke="#e8e8c7" stroke-width="0.8"/><line x1="217.6" y1="121.1" x2="206.1" y2="136.7" stroke="#7d7d58" stroke-width="3.3"/><line x1="217.5" y1="121.0" x2="206.0" y2="136.6" stroke="#d5d59a" stroke-width="2.8"/><line x1="217.2" y1="120.8" x2="205.7" y2="136.4" stroke="#e8e8c7" stroke-width="0.8"/><line x1="219.9" y1="118.1" x2="208.4" y2="133.6" stroke="#7d7d58" stroke-width="3.3"/><line x1="219.8" y1="118.0" x2="208.3" y2="133.5" stroke="#d5d59a" stroke-width="2.8"/><line x1="219.4" y1="117.7" x2="207.9" y2="133.3" stroke="#e8e8c7" stroke-width="0.8"/><circle cx="351.2" cy="240.7" r="9.6" fill="url(#g2)"/><circle cx="374.2" cy="170.8" r="9.6" fill="url(#g2)"/><circle cx="321.4" cy="262.2" r="9.6" fill="url(#g2)"/><circle cx="363.0" cy="135.8" r="9.6" fill="url(#g2)"/><circle cx="247.8" cy="261.8" r="9.6" fill="url(#g2)"/><circle cx="303.7" cy="92.3" r="9.6" fill="url(#g2)"/><circle cx="218.2" cy="240.1" r="9.6" fill="url(#g2)"/><circle cx="266.9" cy="92.2" r="9.6" fill="url(#g2)"/><circle cx="195.8" cy="170.1" r="9.6" fill="url(#g2)"/><circle cx="207.3" cy="135.2" r="9.6" fill="url(#g2)"/><line x1="374.2" y1="190.2" x2="362.7" y2="225.1" stroke="#7c7c4b" stroke-width="9.0"/><line x1="373.8" y1="190.1" x2="362.3" y2="225.0" stroke="#d9d98f" stroke-width="7.6"/><line x1="372.7" y1="189.7" x2="361.2" y2="224.6" stroke="#eaeac1" stroke-width="2.2"/><line x1="362.7" y1="225.1" x2="344.4" y2="231.0" stroke="#7a7a3e" stroke-width="9.0"/><line x1="362.6" y1="224.7" x2="344.2" y2="230.6" stroke="#dede84" stroke-width="7.6"/><line x1="362.2" y1="223.6" x2="343.9" y2="229.5" stroke="#ededbb" stroke-width="2.2"/><line x1="374.2" y1="190.2" x2="363.0" y2="174.5" stroke="#7a7a3e" stroke-width="9.0"/><line x1="373.9" y1="190.5" x2="362.6" y2="174.8" stroke="#dede84" stroke-width="7.6"/><line x1="372.9" y1="191.1" x2="361.7" y2="175.5" stroke="#ededbb" stroke-width="2.2"/><line x1="314.5" y1="252.5" x2="303.0" y2="268.1" stroke="#7a7a3e" stroke-width="9.0"/><line x1="314.2" y1="252.3" x2="302.7" y2="267.8" stroke="#dede84" stroke-width="7.6"/><line x1="313.2" y1="251.6" x2="301.7" y2="267.1" stroke="#ededbb" stroke-width="2.2"/><line x1="303.0" y1="268.1" x2="266.3" y2="267.9" stroke="#7c7c4b" stroke-width="9.0"/><line x1="303.0" y1="267.6" x2="266.3" y2="267.5" stroke="#dada8f" stroke-width="7.6"/><line x1="303.0" y1="266.5" x2="266.3" y2="266.3" stroke="#ebebc1" stroke-width="2.2"/><line x1="351.8" y1="120.2" x2="351.8" y2="139.5" stroke="#7a7a3e" stroke-width="9.0"/><line x1="351.3" y1="120.2" x2="351.3" y2="139.5" stroke="#dede84" stroke-width="7.6"/><line x1="350.2" y1="120.2" x2="350.2" y2="139.5" stroke="#ededbb" stroke-width="2.2"/><line x1="351.8" y1="120.2" x2="322.1" y2="98.4" stroke="#7c7c4b" stroke-width="9.0"/><line x1="352.1" y1="119.8" x2="322.4" y2="98.1" stroke="#dada8f" stroke-width="7.6"/><line x1="352.7" y1="118.9" x2="323.1" y2="97.1" stroke="#ebebc1" stroke-width="2.2"/><line x1="266.3" y1="267.9" x2="255.0" y2="252.3" stroke="#7a7a3e" stroke-width="9.0"/><line x1="265.9" y1="268.2" x2="254.7" y2="252.5" stroke="#dede84" stroke-width="7.6"/><line x1="265.0" y1="268.9" x2="253.7" y2="253.2" stroke="#ededbb" stroke-width="2.2"/><line x1="322.1" y1="98.4" x2="303.8" y2="104.4" stroke="#7a7a3e" stroke-width="9.0"/><line x1="322.0" y1="98.0" x2="303.7" y2="103.9" stroke="#dede84" stroke-width="7.6"/><line x1="321.6" y1="96.9" x2="303.3" y2="102.8" stroke="#ededbb" stroke-width="2.2"/><line x1="225.4" y1="230.5" x2="207.0" y2="224.5" stroke="#7a7a3e" stroke-width="9.0"/><line x1="225.5" y1="230.1" x2="207.1" y2="224.0" stroke="#dede84" stroke-width="7.6"/><line x1="225.9" y1="229.0" x2="207.5" y2="222.9" stroke="#ededbb" stroke-width="2.2"/><line x1="207.0" y1="224.5" x2="195.7" y2="189.4" stroke="#7c7c4b" stroke-width="9.0"/><line x1="206.5" y1="224.6" x2="195.3" y2="189.6" stroke="#dada8f" stroke-width="7.6"/><line x1="205.4" y1="224.9" x2="194.2" y2="189.9" stroke="#ebebc1" stroke-width="2.2"/><line x1="267.0" y1="104.2" x2="248.6" y2="98.1" stroke="#7a7a3e" stroke-width="9.0"/><line x1="267.2" y1="103.8" x2="248.7" y2="97.7" stroke="#dede84" stroke-width="7.6"/><line x1="267.5" y1="102.7" x2="249.1" y2="96.6" stroke="#ededbb" stroke-width="2.2"/><line x1="248.6" y1="98.1" x2="218.8" y2="119.6" stroke="#7c7c4b" stroke-width="9.0"/><line x1="248.3" y1="97.8" x2="218.5" y2="119.2" stroke="#dada8f" stroke-width="7.6"/><line x1="247.7" y1="96.8" x2="217.8" y2="118.3" stroke="#ebebc1" stroke-width="2.2"/><line x1="207.3" y1="173.9" x2="195.7" y2="189.4" stroke="#7a7a3e" stroke-width="9.0"/><line x1="206.9" y1="173.6" x2="195.4" y2="189.2" stroke="#dede84" stroke-width="7.6"/><line x1="205.9" y1="172.9" x2="194.4" y2="188.5" stroke="#ededbb" stroke-width="2.2"/><line x1="218.8" y1="119.6" x2="218.8" y2="139.0" stroke="#7a7a3e" stroke-width="9.0"/><line x1="218.3" y1="119.6" x2="218.3" y2="139.0" stroke="#dede84" stroke-width="7.6"/><line x1="217.1" y1="119.6" x2="217.1" y2="139.0" stroke="#ededbb" stroke-width="2.2"/><circle cx="362.7" cy="225.1" r="9.6" fill="url(#g4)"/><circle cx="374.2" cy="190.2" r="9.6" fill="url(#g4)"/><circle cx="303.0" cy="268.1" r="9.6" fill="url(#g4)"/><circle cx="351.8" cy="120.2" r="9.6" fill="url(#g4)"/><circle cx="266.3" cy="267.9" r="9.6" fill="url(#g4)"/><circle cx="322.1" cy="98.4" r="9.6" fill="url(#g4)"/><circle cx="207.0" cy="224.5" r="9.6" fill="url(#g4)"/><circle cx="248.6" cy="98.1" r="9.6" fill="url(#g4)"/><circle cx="195.7" cy="189.4" r="9.6" fill="url(#g4)"/><circle cx="218.8" cy="119.6" r="9.6" fill="url(#g4)"/><line x1="344.4" y1="231.0" x2="344.6" y2="199.8" stroke="#7a7a3a" stroke-width="9.0"/><line x1="343.9" y1="231.0" x2="344.1" y2="199.8" stroke="#e0e080" stroke-width="7.6"/><line x1="342.8" y1="231.0" x2="342.9" y2="199.8" stroke="#eeeeb9" stroke-width="2.2"/><line x1="343.7" y1="230.1" x2="313.9" y2="251.6" stroke="#7a7a3a" stroke-width="3.3"/><line x1="343.6" y1="230.0" x2="313.8" y2="251.4" stroke="#e0e080" stroke-width="2.8"/><line x1="343.3" y1="229.6" x2="313.5" y2="251.1" stroke="#eeeeb9" stroke-width="0.8"/><line x1="345.1" y1="232.0" x2="315.2" y2="253.5" stroke="#7a7a3a" stroke-width="3.3"/><line x1="345.0" y1="231.9" x2="315.1" y2="253.4" stroke="#e0e080" stroke-width="2.8"/><line x1="344.7" y1="231.5" x2="314.9" y2="253.0" stroke="#eeeeb9" stroke-width="0.8"/><line x1="361.9" y1="174.9" x2="350.7" y2="139.9" stroke="#7a7a3a" stroke-width="3.3"/><line x1="361.7" y1="175.0" x2="350.5" y2="139.9" stroke="#e0e080" stroke-width="2.8"/><line x1="361.3" y1="175.1" x2="350.1" y2="140.1" stroke="#eeeeb9" stroke-width="0.8"/><line x1="364.1" y1="174.2" x2="352.9" y2="139.2" stroke="#7a7a3a" stroke-width="3.3"/><line x1="364.0" y1="174.2" x2="352.7" y2="139.2" stroke="#e0e080" stroke-width="2.8"/><line x1="363.6" y1="174.4" x2="352.3" y2="139.3" stroke="#eeeeb9" stroke-width="0.8"/><line x1="363.0" y1="174.5" x2="344.6" y2="199.8" stroke="#7a7a3a" stroke-width="9.0"/><line x1="362.6" y1="174.3" x2="344.2" y2="199.5" stroke="#e0e080" stroke-width="7.6"/><line x1="361.7" y1="173.6" x2="343.2" y2="198.8" stroke="#eeeeb9" stroke-width="2.2"/><line x1="314.5" y1="252.5" x2="284.9" y2="242.8" stroke="#7a7a3a" stroke-width="9.0"/><line x1="314.7" y1="252.1" x2="285.0" y2="242.3" stroke="#e0e080" stroke-width="7.6"/><line x1="315.0" y1="251.0" x2="285.4" y2="241.2" stroke="#eeeeb9" stroke-width="2.2"/><line x1="351.8" y1="139.5" x2="322.1" y2="129.8" stroke="#7a7a3a" stroke-width="9.0"/><line x1="351.9" y1="139.1" x2="322.3" y2="129.3" stroke="#e0e080" stroke-width="7.6"/><line x1="352.3" y1="138.0" x2="322.6" y2="128.2" stroke="#eeeeb9" stroke-width="2.2"/><line x1="284.9" y1="242.8" x2="255.0" y2="252.3" stroke="#7a7a3a" stroke-width="9.0"/><line x1="284.7" y1="242.3" x2="254.9" y2="251.8" stroke="#e0e080" stroke-width="7.6"/><line x1="284.4" y1="241.2" x2="254.6" y2="250.7" stroke="#eeeeb9" stroke-width="2.2"/><line x1="255.8" y1="251.3" x2="226.1" y2="229.6" stroke="#7a7a3a" stroke-width="3.3"/><line x1="255.8" y1="251.2" x2="226.2" y2="229.5" stroke="#e0e080" stroke-width="2.8"/><line x1="256.1" y1="250.8" x2="226.5" y2="229.1" stroke="#eeeeb9" stroke-width="0.8"/><line x1="254.3" y1="253.2" x2="224.7" y2="231.5" stroke="#7a7a3a" stroke-width="3.3"/><line x1="254.4" y1="253.1" x2="224.8" y2="231.4" stroke="#e0e080" stroke-width="2.8"/><line x1="254.7" y1="252.7" x2="225.0" y2="231.0" stroke="#eeeeb9" stroke-width="0.8"/><line x1="322.1" y1="129.8" x2="303.8" y2="104.4" stroke="#7a7a3a" stroke-width="9.0"/><line x1="321.8" y1="130.0" x2="303.4" y2="104.6" stroke="#e0e080" stroke-width="7.6"/><line x1="320.8" y1="130.7" x2="302.5" y2="105.3" stroke="#eeeeb9" stroke-width="2.2"/><line x1="303.8" y1="105.5" x2="267.0" y2="105.4" stroke="#7a7a3a" stroke-width="3.3"/><line x1="303.8" y1="105.4" x2="267.0" y2="105.2" stroke="#e0e080" stroke-width="2.8"/><line x1="303.8" y1="104.9" x2="267.0" y2="104.8" stroke="#eeeeb9" stroke-width="0.8"/><line x1="303.8" y1="103.2" x2="267.0" y2="103.0" stroke="#7a7a3a" stroke-width="3.3"/><line x1="303.8" y1="103.0" x2="267.0" y2="102.9" stroke="#e0e080" stroke-width="2.8"/><line x1="303.8" y1="102.6" x2="267.0" y2="102.4" stroke="#eeeeb9" stroke-width="0.8"/><line x1="225.4" y1="230.5" x2="225.6" y2="199.3" stroke="#7a7a3a" stroke-width="9.0"/><line x1="224.9" y1="230.5" x2="225.1" y2="199.3" stroke="#e0e080" stroke-width="7.6"/><line x1="223.8" y1="230.5" x2="224.0" y2="199.3" stroke="#eeeeb9" stroke-width="2.2"/><line x1="267.0" y1="104.2" x2="248.6" y2="129.4" stroke="#7a7a3a" stroke-width="9.0"/><line x1="266.7" y1="103.9" x2="248.2" y2="129.2" stroke="#e0e080" stroke-width="7.6"/><line x1="265.7" y1="103.2" x2="247.3" y2="128.5" stroke="#eeeeb9" stroke-width="2.2"/><line x1="225.6" y1="199.3" x2="207.3" y2="173.9" stroke="#7a7a3a" stroke-width="9.0"/><line x1="225.2" y1="199.5" x2="206.9" y2="174.1" stroke="#e0e080" stroke-width="7.6"/><line x1="224.3" y1="200.2" x2="205.9" y2="174.8" stroke="#eeeeb9" stroke-width="2.2"/><line x1="219.9" y1="139.3" x2="208.4" y2="174.3" stroke="#7a7a3a" stroke-width="3.3"/><line x1="219.7" y1="139.3" x2="208.2" y2="174.2" stroke="#e0e080" stroke-width="2.8"/><line x1="219.3" y1="139.1" x2="207.8" y2="174.1" stroke="#eeeeb9" stroke-width="0.8"/><line x1="217.6" y1="138.6" x2="206.1" y2="173.5" stroke="#7a7a3a" stroke-width="3.3"/><line x1="217.5" y1="138.5" x2="206.0" y2="173.5" stroke="#e0e080" stroke-width="2.8"/><line x1="217.1" y1="138.4" x2="205.6" y2="173.3" stroke="#eeeeb9" stroke-width="0.8"/><line x1="248.6" y1="129.4" x2="218.8" y2="139.0" stroke="#7a7a3a" stroke-width="9.0"/><line x1="248.5" y1="129.0" x2="218.6" y2="138.5" stroke="#e0e080" stroke-width="7.6"/><line x1="248.1" y1="127.9" x2="218.3" y2="137.4" stroke="#eeeeb9" stroke-width="2.2"/><circle cx="344.4" cy="231.0" r="9.6" fill="url(#g5)"/><circle cx="363.0" cy="174.5" r="9.6" fill="url(#g5)"/><circle cx="314.5" cy="252.5" r="9.6" fill="url(#g5)"/><circle cx="351.8" cy="139.5" r="9.6" fill="url(#g5)"/><circle cx="255.0" cy="252.3" r="9.6" fill="url(#g5)"/><circle cx="303.8" cy="104.4" r="9.6" fill="url(#g5)"/><circle cx="225.4" cy="230.5" r="9.6" fill="url(#g5)"/><circle cx="267.0" cy="104.2" r="9.6" fill="url(#g5)"/><circle cx="207.3" cy="173.9" r="9.6" fill="url(#g5)"/><circle cx="218.8" cy="139.0" r="9.6" fill="url(#g5)"/><line x1="345.3" y1="197.6" x2="315.6" y2="187.9" stroke="#7a7a3a" stroke-width="3.3"/><line x1="345.3" y1="197.5" x2="315.7" y2="187.7" stroke="#e0e080" stroke-width="2.8"/><line x1="345.4" y1="197.1" x2="315.8" y2="187.3" stroke="#eeeeb9" stroke-width="0.8"/><line x1="343.8" y1="201.9" x2="314.2" y2="192.2" stroke="#7a7a3a" stroke-width="3.3"/><line x1="343.9" y1="201.8" x2="314.2" y2="192.0" stroke="#e0e080" stroke-width="2.8"/><line x1="344.0" y1="201.4" x2="314.4" y2="191.6" stroke="#eeeeb9" stroke-width="0.8"/><line x1="282.6" y1="242.7" x2="282.8" y2="211.5" stroke="#7a7a3a" stroke-width="3.3"/><line x1="282.5" y1="242.7" x2="282.6" y2="211.5" stroke="#e0e080" stroke-width="2.8"/><line x1="282.0" y1="242.7" x2="282.2" y2="211.5" stroke="#eeeeb9" stroke-width="0.8"/><line x1="287.1" y1="242.8" x2="287.3" y2="211.5" stroke="#7a7a3a" stroke-width="3.3"/><line x1="287.0" y1="242.8" x2="287.1" y2="211.5" stroke="#e0e080" stroke-width="2.8"/><line x1="286.5" y1="242.8" x2="286.7" y2="211.5" stroke="#eeeeb9" stroke-width="0.8"/><line x1="320.3" y1="128.4" x2="301.9" y2="153.7" stroke="#7a7a3a" stroke-width="3.3"/><line x1="320.2" y1="128.3" x2="301.7" y2="153.6" stroke="#e0e080" stroke-width="2.8"/><line x1="319.8" y1="128.1" x2="301.4" y2="153.3" stroke="#eeeeb9" stroke-width="0.8"/><line x1="323.9" y1="131.1" x2="305.5" y2="156.3" stroke="#7a7a3a" stroke-width="3.3"/><line x1="323.8" y1="131.0" x2="305.4" y2="156.2" stroke="#e0e080" stroke-width="2.8"/><line x1="323.5" y1="130.7" x2="305.0" y2="156.0" stroke="#eeeeb9" stroke-width="0.8"/><line x1="254.7" y1="187.6" x2="224.9" y2="197.1" stroke="#7a7a3a" stroke-width="3.3"/><line x1="254.7" y1="187.5" x2="224.8" y2="197.0" stroke="#e0e080" stroke-width="2.8"/><line x1="254.5" y1="187.1" x2="224.7" y2="196.6" stroke="#eeeeb9" stroke-width="0.8"/><line x1="256.1" y1="191.9" x2="226.3" y2="201.4" stroke="#7a7a3a" stroke-width="3.3"/><line x1="256.0" y1="191.7" x2="226.2" y2="201.3" stroke="#e0e080" stroke-width="2.8"/><line x1="255.9" y1="191.3" x2="226.1" y2="200.9" stroke="#eeeeb9" stroke-width="0.8"/><line x1="265.1" y1="156.2" x2="246.8" y2="130.8" stroke="#7a7a3a" stroke-width="3.3"/><line x1="265.0" y1="156.3" x2="246.6" y2="130.9" stroke="#e0e080" stroke-width="2.8"/><line x1="264.6" y1="156.5" x2="246.3" y2="131.1" stroke="#eeeeb9" stroke-width="0.8"/><line x1="268.7" y1="153.5" x2="250.4" y2="128.1" stroke="#7a7a3a" stroke-width="3.3"/><line x1="268.6" y1="153.6" x2="250.3" y2="128.2" stroke="#e0e080" stroke-width="2.8"/><line x1="268.3" y1="153.9" x2="249.9" y2="128.5" stroke="#eeeeb9" stroke-width="0.8"/><circle cx="344.6" cy="199.8" r="9.6" fill="url(#g5)"/><circle cx="284.9" cy="242.8" r="9.6" fill="url(#g5)"/><circle cx="322.1" cy="129.8" r="9.6" fill="url(#g5)"/><circle cx="225.6" cy="199.3" r="9.6" fill="url(#g5)"/><circle cx="248.6" cy="129.4" r="9.6" fill="url(#g5)"/><line x1="314.9" y1="190.0" x2="303.7" y2="155.0" stroke="#7a7a3a" stroke-width="9.0"/><line x1="314.5" y1="190.2" x2="303.3" y2="155.1" stroke="#e0e080" stroke-width="7.6"/><line x1="313.4" y1="190.5" x2="302.1" y2="155.5" stroke="#eeeeb9" stroke-width="2.2"/><line x1="314.9" y1="190.0" x2="285.1" y2="211.5" stroke="#7a7a3a" stroke-width="9.0"/><line x1="314.6" y1="189.7" x2="284.8" y2="211.1" stroke="#e0e080" stroke-width="7.6"/><line x1="314.0" y1="188.7" x2="284.1" y2="210.2" stroke="#eeeeb9" stroke-width="2.2"/><line x1="285.1" y1="211.5" x2="255.4" y2="189.8" stroke="#7a7a3a" stroke-width="9.0"/><line x1="285.3" y1="211.1" x2="255.7" y2="189.4" stroke="#e0e080" stroke-width="7.6"/><line x1="286.0" y1="210.2" x2="256.4" y2="188.5" stroke="#eeeeb9" stroke-width="2.2"/><line x1="303.7" y1="155.0" x2="266.9" y2="154.8" stroke="#7a7a3a" stroke-width="9.0"/><line x1="303.7" y1="154.6" x2="266.9" y2="154.4" stroke="#e0e080" stroke-width="7.6"/><line x1="303.7" y1="153.4" x2="266.9" y2="153.2" stroke="#eeeeb9" stroke-width="2.2"/><line x1="266.9" y1="154.8" x2="255.4" y2="189.8" stroke="#7a7a3a" stroke-width="9.0"/><line x1="266.5" y1="154.7" x2="255.0" y2="189.6" stroke="#e0e080" stroke-width="7.6"/><line x1="265.4" y1="154.3" x2="253.9" y2="189.3" stroke="#eeeeb9" stroke-width="2.2"/><circle cx="314.9" cy="190.0" r="9.6" fill="url(#g5)"/><circle cx="285.1" cy="211.5" r="9.6" fill="url(#g5)"/><circle cx="303.7" cy="155.0" r="9.6" fill="url(#g5)"/><circle cx="255.4" cy="189.8" r="9.6" fill="url(#g5)"/><circle cx="266.9" cy="154.8" r="9.6" fill="url(#g5)"/></svg></div>

<div class="win" style="left:443px;top:51px;width:321px;height:244px"></div>
<div class="wt" style="left:446px;top:54px;width:315px;background:#808080;color:#cacaca"><span>TON - 3D Viewer</span></div>
<div class="vp" style="left:446px;top:68px;width:314px;height:225px;background:#000"><svg class="a" style="left:1px;top:1px" width="312" height="223" viewBox="447 69 312 223"><g stroke="#c4c4c4" stroke-width="1.3" fill="none"><rect x="524.5" y="81.3" width="157.8" height="198.4"/><rect x="534.3" y="92.9" width="138" height="175"/><path d="M524.5 81.3L534.3 92.9M682.3 81.3L672.3 92.9M524.5 279.7L534.3 267.9M682.3 279.7L672.3 267.9"/></g><polygon points="569.0,83.9 589.6,98.3 562.8,108.1" fill="#dcac2c"/><polygon points="569.0,83.9 589.6,98.3 572.3,95.8" fill="#e7b32d"/><polygon points="589.6,98.3 562.8,108.1 572.3,95.8" fill="#c3941c"/><polygon points="562.8,108.1 569.0,83.9 572.3,95.8" fill="#c1921b"/><polygon points="562.8,108.1 542.2,126.9 567.2,133.1" fill="#dcac2c"/><polygon points="562.8,108.1 542.2,126.9 555.9,121.7" fill="#cf9f22"/><polygon points="542.2,126.9 567.2,133.1 555.9,121.7" fill="#b88b17"/><polygon points="567.2,133.1 562.8,108.1 555.9,121.7" fill="#e2b02b"/><polygon points="567.2,133.1 590.5,140.3 571.7,159.1" fill="#dcac2c"/><polygon points="567.2,133.1 590.5,140.3 575.0,143.2" fill="#e4b12c"/><polygon points="590.5,140.3 571.7,159.1 575.0,143.2" fill="#ce9e22"/><polygon points="571.7,159.1 567.2,133.1 575.0,143.2" fill="#b98b18"/><polygon points="513.6,127.8 542.2,126.9 528.8,151.0" fill="#dcac2c"/><polygon points="513.6,127.8 542.2,126.9 526.7,134.2" fill="#dfad2a"/><polygon points="542.2,126.9 528.8,151.0 526.7,134.2" fill="#d4a425"/><polygon points="528.8,151.0 513.6,127.8 526.7,134.2" fill="#b58816"/><polygon points="528.8,151.0 520.7,167.1 545.8,167.1" fill="#dcac2c"/><polygon points="528.8,151.0 520.7,167.1 530.3,160.7" fill="#c6971e"/><polygon points="520.7,167.1 545.8,167.1 530.3,160.7" fill="#bc8e19"/><polygon points="545.8,167.1 528.8,151.0 530.3,160.7" fill="#e7b42d"/><polygon points="545.8,167.1 571.7,159.1 563.7,176.8" fill="#dcac2c"/><polygon points="545.8,167.1 571.7,159.1 558.9,166.7" fill="#d9a827"/><polygon points="571.7,159.1 563.7,176.8 558.9,166.7" fill="#d6a526"/><polygon points="563.7,176.8 545.8,167.1 558.9,166.7" fill="#b58816"/><polygon points="566.4,183.9 542.2,193.8 569.0,202.7" fill="#dcac2c"/><polygon points="566.4,183.9 542.2,193.8 557.7,192.5" fill="#d7a626"/><polygon points="542.2,193.8 569.0,202.7 557.7,192.5" fill="#b78a17"/><polygon points="569.0,202.7 566.4,183.9 557.7,192.5" fill="#e2af2b"/><polygon points="513.6,194.7 542.2,193.8 525.2,212.6" fill="#dcac2c"/><polygon points="513.6,194.7 542.2,193.8 525.5,199.4" fill="#dfad2a"/><polygon points="542.2,193.8 525.2,212.6 525.5,199.4" fill="#cf9f22"/><polygon points="525.2,212.6 513.6,194.7 525.5,199.4" fill="#b58816"/><polygon points="525.2,212.6 519.0,230.5 545.8,230.1" fill="#dcac2c"/><polygon points="525.2,212.6 519.0,230.5 528.5,223.4" fill="#c2941c"/><polygon points="519.0,230.5 545.8,230.1 528.5,223.4" fill="#bc8e19"/><polygon points="545.8,230.1 525.2,212.6 528.5,223.4" fill="#e7b32d"/><polygon points="569.0,202.7 589.6,222.4 563.7,226.9" fill="#dcac2c"/><polygon points="569.0,202.7 589.6,222.4 572.6,216.3" fill="#e7b42d"/><polygon points="589.6,222.4 563.7,226.9 572.6,216.3" fill="#bf911b"/><polygon points="563.7,226.9 569.0,202.7 572.6,216.3" fill="#c0921b"/><polygon points="545.8,230.1 569.0,226.9 565.5,248.0" fill="#dcac2c"/><polygon points="545.8,230.1 569.0,226.9 558.6,234.0" fill="#ddab29"/><polygon points="569.0,226.9 565.5,248.0 558.6,234.0" fill="#dcaa28"/><polygon points="565.5,248.0 545.8,230.1 558.6,234.0" fill="#b48716"/><polygon points="565.5,248.0 590.5,256.4 570.0,269.8" fill="#dcac2c"/><polygon points="565.5,248.0 590.5,256.4 573.8,257.1" fill="#e4b12c"/><polygon points="590.5,256.4 570.0,269.8 573.8,257.1" fill="#c8991f"/><polygon points="570.0,269.8 565.5,248.0 573.8,257.1" fill="#b88b18"/><polygon points="589.6,98.3 617.9,98.3 603.3,123.3" fill="#dcac2c"/><polygon points="589.6,98.3 617.9,98.3 602.1,105.6" fill="#e0ad2a"/><polygon points="617.9,98.3 603.3,123.3 602.1,105.6" fill="#b58816"/><polygon points="603.3,123.3 589.6,98.3 602.1,105.6" fill="#d5a425"/><polygon points="603.3,123.3 590.5,140.3 617.0,140.3" fill="#dcac2c"/><polygon points="603.3,123.3 590.5,140.3 602.1,133.6" fill="#e7b32d"/><polygon points="590.5,140.3 617.0,140.3 602.1,133.6" fill="#bc8e19"/><polygon points="617.0,140.3 603.3,123.3 602.1,133.6" fill="#cb9b20"/><polygon points="589.6,222.4 617.9,223.0 603.3,244.9" fill="#dcac2c"/><polygon points="589.6,222.4 617.9,223.0 602.1,229.1" fill="#dfad2a"/><polygon points="617.9,223.0 603.3,244.9 602.1,229.1" fill="#b58816"/><polygon points="603.3,244.9 589.6,222.4 602.1,229.1" fill="#d4a324"/><polygon points="603.3,244.9 590.5,256.4 617.0,256.9" fill="#dcac2c"/><polygon points="603.3,244.9 590.5,256.4 602.1,251.7" fill="#e7b42d"/><polygon points="590.5,256.4 617.0,256.9 602.1,251.7" fill="#bc8e19"/><polygon points="617.0,256.9 603.3,244.9 602.1,251.7" fill="#cf9f22"/><polygon points="637.6,83.9 617.0,98.3 643.8,108.1" fill="#dcac2c"/><polygon points="637.6,83.9 617.0,98.3 631.3,95.8" fill="#e7b32d"/><polygon points="617.0,98.3 643.8,108.1 631.3,95.8" fill="#c3941c"/><polygon points="643.8,108.1 637.6,83.9 631.3,95.8" fill="#c1921b"/><polygon points="643.8,108.1 664.4,126.9 639.4,133.1" fill="#dcac2c"/><polygon points="643.8,108.1 664.4,126.9 647.7,121.7" fill="#cf9f22"/><polygon points="664.4,126.9 639.4,133.1 647.7,121.7" fill="#b88b17"/><polygon points="639.4,133.1 643.8,108.1 647.7,121.7" fill="#e2b02b"/><polygon points="639.4,133.1 616.1,140.3 634.9,159.1" fill="#dcac2c"/><polygon points="639.4,133.1 616.1,140.3 628.6,143.2" fill="#e4b12c"/><polygon points="616.1,140.3 634.9,159.1 628.6,143.2" fill="#ce9e22"/><polygon points="634.9,159.1 639.4,133.1 628.6,143.2" fill="#b98b18"/><polygon points="693.0,127.8 664.4,126.9 677.8,151.0" fill="#dcac2c"/><polygon points="693.0,127.8 664.4,126.9 676.9,134.2" fill="#dfad2a"/><polygon points="664.4,126.9 677.8,151.0 676.9,134.2" fill="#d4a425"/><polygon points="677.8,151.0 693.0,127.8 676.9,134.2" fill="#b58816"/><polygon points="677.8,151.0 685.9,167.1 660.8,167.1" fill="#dcac2c"/><polygon points="677.8,151.0 685.9,167.1 673.3,160.7" fill="#c6971e"/><polygon points="685.9,167.1 660.8,167.1 673.3,160.7" fill="#bc8e19"/><polygon points="660.8,167.1 677.8,151.0 673.3,160.7" fill="#e7b42d"/><polygon points="660.8,167.1 634.9,159.1 642.9,176.8" fill="#dcac2c"/><polygon points="660.8,167.1 634.9,159.1 644.7,166.7" fill="#d9a827"/><polygon points="634.9,159.1 642.9,176.8 644.7,166.7" fill="#d6a526"/><polygon points="642.9,176.8 660.8,167.1 644.7,166.7" fill="#b58816"/><polygon points="640.2,183.9 664.4,193.8 637.6,202.7" fill="#dcac2c"/><polygon points="640.2,183.9 664.4,193.8 645.9,192.5" fill="#d7a626"/><polygon points="664.4,193.8 637.6,202.7 645.9,192.5" fill="#b78a17"/><polygon points="637.6,202.7 640.2,183.9 645.9,192.5" fill="#e2af2b"/><polygon points="693.0,194.7 664.4,193.8 681.4,212.6" fill="#dcac2c"/><polygon points="693.0,194.7 664.4,193.8 678.1,199.4" fill="#dfad2a"/><polygon points="664.4,193.8 681.4,212.6 678.1,199.4" fill="#cf9f22"/><polygon points="681.4,212.6 693.0,194.7 678.1,199.4" fill="#b58816"/><polygon points="681.4,212.6 687.6,230.5 660.8,230.1" fill="#dcac2c"/><polygon points="681.4,212.6 687.6,230.5 675.1,223.4" fill="#c2941c"/><polygon points="687.6,230.5 660.8,230.1 675.1,223.4" fill="#bc8e19"/><polygon points="660.8,230.1 681.4,212.6 675.1,223.4" fill="#e7b32d"/><polygon points="637.6,202.7 617.0,222.4 642.9,226.9" fill="#dcac2c"/><polygon points="637.6,202.7 617.0,222.4 631.0,216.3" fill="#e7b42d"/><polygon points="617.0,222.4 642.9,226.9 631.0,216.3" fill="#bf911b"/><polygon points="642.9,226.9 637.6,202.7 631.0,216.3" fill="#c0921b"/><polygon points="660.8,230.1 637.6,226.9 641.1,248.0" fill="#dcac2c"/><polygon points="660.8,230.1 637.6,226.9 645.0,234.0" fill="#ddab29"/><polygon points="637.6,226.9 641.1,248.0 645.0,234.0" fill="#dcaa28"/><polygon points="641.1,248.0 660.8,230.1 645.0,234.0" fill="#b48716"/><polygon points="641.1,248.0 616.1,256.4 636.6,269.8" fill="#dcac2c"/><polygon points="641.1,248.0 616.1,256.4 629.8,257.1" fill="#e4b12c"/><polygon points="616.1,256.4 636.6,269.8 629.8,257.1" fill="#c8991f"/><polygon points="636.6,269.8 641.1,248.0 629.8,257.1" fill="#b88b18"/><circle cx="525.2" cy="212.6" r="1.8" fill="#d80000"/><circle cx="528.8" cy="151" r="1.8" fill="#d80000"/><circle cx="534.2" cy="146.6" r="1.8" fill="#d80000"/><circle cx="535" cy="208.1" r="1.8" fill="#d80000"/><circle cx="542.2" cy="126.9" r="1.8" fill="#d80000"/><circle cx="542.2" cy="193.8" r="1.8" fill="#d80000"/><circle cx="545.8" cy="167.1" r="1.8" fill="#d80000"/><circle cx="545.8" cy="230.1" r="1.8" fill="#d80000"/><circle cx="561.9" cy="230.8" r="1.8" fill="#d80000"/><circle cx="562.8" cy="108.1" r="1.8" fill="#d80000"/><circle cx="564.6" cy="133.7" r="1.8" fill="#d80000"/><circle cx="565.5" cy="248" r="1.8" fill="#d80000"/><circle cx="566.4" cy="183.9" r="1.8" fill="#d80000"/><circle cx="567.2" cy="133.1" r="1.8" fill="#d80000"/><circle cx="569" cy="202.7" r="1.8" fill="#d80000"/><circle cx="571.7" cy="159.1" r="1.8" fill="#d80000"/><circle cx="589.6" cy="98.3" r="1.8" fill="#d80000"/><circle cx="589.6" cy="222.4" r="1.8" fill="#d80000"/><circle cx="590.5" cy="140.3" r="1.8" fill="#d80000"/><circle cx="590.5" cy="256.4" r="1.8" fill="#d80000"/><circle cx="603.3" cy="123.3" r="1.8" fill="#d80000"/><circle cx="603.3" cy="244.9" r="1.8" fill="#d80000"/><circle cx="616.1" cy="140.3" r="1.8" fill="#d80000"/><circle cx="616.1" cy="256.4" r="1.8" fill="#d80000"/><circle cx="617.0" cy="98.3" r="1.8" fill="#d80000"/><circle cx="617.0" cy="222.4" r="1.8" fill="#d80000"/><circle cx="634.9" cy="159.1" r="1.8" fill="#d80000"/><circle cx="637.6" cy="202.7" r="1.8" fill="#d80000"/><circle cx="639.4" cy="133.1" r="1.8" fill="#d80000"/><circle cx="640.2" cy="183.9" r="1.8" fill="#d80000"/><circle cx="641.1" cy="248" r="1.8" fill="#d80000"/><circle cx="642.0" cy="133.7" r="1.8" fill="#d80000"/><circle cx="643.8" cy="108.1" r="1.8" fill="#d80000"/><circle cx="644.7" cy="230.8" r="1.8" fill="#d80000"/><circle cx="660.8" cy="167.1" r="1.8" fill="#d80000"/><circle cx="660.8" cy="230.1" r="1.8" fill="#d80000"/><circle cx="664.4" cy="126.9" r="1.8" fill="#d80000"/><circle cx="664.4" cy="193.8" r="1.8" fill="#d80000"/><circle cx="671.6" cy="208.1" r="1.8" fill="#d80000"/><circle cx="672.4" cy="146.6" r="1.8" fill="#d80000"/><circle cx="677.8" cy="151" r="1.8" fill="#d80000"/><circle cx="681.4" cy="212.6" r="1.8" fill="#d80000"/><text x="533.5" y="92.3" font-family="Liberation Sans" font-size="8.5" fill="#c8a020">B</text><text x="533.8" y="266.8" font-family="Liberation Sans" font-size="9" fill="#d0d0d0">0</text><text x="673.5" y="268" font-family="Liberation Sans" font-size="9" fill="#c00000">A</text><text x="524" y="280.4" font-family="Liberation Sans" font-size="8.5" fill="#30b030">C</text></svg></div>

<div class="win" style="left:122px;top:296px;width:321px;height:245px"></div>
<div class="wt" style="left:125px;top:299px;width:315px;background:#808080;color:#cacaca"><span>urea - 3D Viewer</span></div>
<div class="vp" style="left:125px;top:313px;width:315px;height:224px;background:#000"><svg class="a" style="left:1px;top:1px" width="313" height="222" viewBox="126 314 313 222"><defs><radialGradient id="uH" cx="0.5" cy="0.5" fx="0.4" fy="0.35" r="0.6"><stop offset="0" stop-color="#ffffff"/><stop offset="0.15" stop-color="#f0f0f0"/><stop offset="0.7" stop-color="#c4c4c4"/><stop offset="1" stop-color="#707070"/></radialGradient><radialGradient id="uN" cx="0.5" cy="0.5" fx="0.4" fy="0.35" r="0.6"><stop offset="0" stop-color="#d0d0ff"/><stop offset="0.15" stop-color="#2020ff"/><stop offset="0.7" stop-color="#0000d0"/><stop offset="1" stop-color="#000070"/></radialGradient><radialGradient id="uC" cx="0.5" cy="0.5" fx="0.4" fy="0.35" r="0.6"><stop offset="0" stop-color="#e0e0e0"/><stop offset="0.15" stop-color="#888888"/><stop offset="0.7" stop-color="#606060"/><stop offset="1" stop-color="#303030"/></radialGradient><radialGradient id="uO" cx="0.5" cy="0.5" fx="0.4" fy="0.35" r="0.6"><stop offset="0" stop-color="#ffb0b0"/><stop offset="0.15" stop-color="#ff1010"/><stop offset="0.7" stop-color="#c00000"/><stop offset="1" stop-color="#600000"/></radialGradient></defs><g stroke="#d8d8d8" stroke-width="1.2" fill="none"><line x1="189.4" y1="381.9" x2="316.1" y2="364.9"/><line x1="316.1" y1="364.9" x2="346.9" y2="348.8"/><line x1="346.9" y1="348.8" x2="242" y2="362.9"/><line x1="242" y1="362.9" x2="189.4" y2="381.9"/><line x1="189.4" y1="381.9" x2="218.8" y2="502.7"/><line x1="316.1" y1="364.9" x2="337.9" y2="506.6"/><line x1="346.9" y1="348.8" x2="364.3" y2="461.4"/><line x1="242" y1="362.9" x2="261.8" y2="464.6"/><line x1="218.8" y1="502.7" x2="337.9" y2="506.6"/><line x1="337.9" y1="506.6" x2="364.3" y2="461.4"/><line x1="364.3" y1="461.4" x2="261.8" y2="464.6"/><line x1="261.8" y1="464.6" x2="218.8" y2="502.7"/></g><line x1="225.8" y1="336.1" x2="231.4" y2="343.8" stroke="#e8e8e8" stroke-width="5.2"/><line x1="231.4" y1="343.8" x2="237" y2="351.4" stroke="#0000e8" stroke-width="5.2"/><line x1="226.6" y1="357.8" x2="231.8" y2="354.6" stroke="#e8e8e8" stroke-width="5.2"/><line x1="231.8" y1="354.6" x2="237" y2="351.4" stroke="#0000e8" stroke-width="5.2"/><line x1="237" y1="351.4" x2="251.5" y2="358.6" stroke="#0000e8" stroke-width="5.2"/><line x1="251.5" y1="358.6" x2="266" y2="365.9" stroke="#787878" stroke-width="5.2"/><line x1="266" y1="365.9" x2="271.6" y2="363.5" stroke="#787878" stroke-width="5.2"/><line x1="271.6" y1="363.5" x2="277.3" y2="361.1" stroke="#e80000" stroke-width="5.2"/><line x1="266" y1="365.9" x2="273.6" y2="376.4" stroke="#787878" stroke-width="5.2"/><line x1="273.6" y1="376.4" x2="281.3" y2="386.8" stroke="#0000e8" stroke-width="5.2"/><line x1="281.3" y1="386.8" x2="292.2" y2="392.5" stroke="#0000e8" stroke-width="5.2"/><line x1="292.2" y1="392.5" x2="303.1" y2="398.1" stroke="#e8e8e8" stroke-width="5.2"/><circle cx="225.8" cy="336.1" r="8.4" fill="url(#uH)"/><circle cx="237" cy="351.4" r="7.4" fill="url(#uN)"/><circle cx="226.6" cy="357.8" r="8.9" fill="url(#uH)"/><circle cx="266" cy="365.9" r="7.4" fill="url(#uC)"/><circle cx="277.3" cy="361.1" r="8.4" fill="url(#uO)"/><circle cx="281.3" cy="386.8" r="7.9" fill="url(#uN)"/><circle cx="303.1" cy="398.1" r="8.9" fill="url(#uH)"/><line x1="258" y1="390.8" x2="257.1" y2="397.2" stroke="#e8e8e8" stroke-width="5.2"/><line x1="257.1" y1="397.2" x2="256.1" y2="403.6" stroke="#0000e8" stroke-width="5.2"/><line x1="267.6" y1="390.9" x2="261.9" y2="397.2" stroke="#e8e8e8" stroke-width="5.2"/><line x1="261.9" y1="397.2" x2="256.1" y2="403.6" stroke="#0000e8" stroke-width="5.2"/><line x1="256.1" y1="403.6" x2="247.8" y2="413.5" stroke="#0000e8" stroke-width="5.2"/><line x1="247.8" y1="413.5" x2="239.4" y2="423.3" stroke="#787878" stroke-width="5.2"/><line x1="239.4" y1="423.3" x2="232.5" y2="427.2" stroke="#787878" stroke-width="5.2"/><line x1="232.5" y1="427.2" x2="225.6" y2="431.2" stroke="#e80000" stroke-width="5.2"/><line x1="239.4" y1="423.3" x2="237.4" y2="431.1" stroke="#787878" stroke-width="5.2"/><line x1="237.4" y1="431.1" x2="235.4" y2="439" stroke="#0000e8" stroke-width="5.2"/><line x1="235.4" y1="439" x2="228.1" y2="444.4" stroke="#0000e8" stroke-width="5.2"/><line x1="228.1" y1="444.4" x2="220.7" y2="449.9" stroke="#e8e8e8" stroke-width="5.2"/><circle cx="258" cy="390.8" r="8.4" fill="url(#uH)"/><circle cx="267.6" cy="390.9" r="9.4" fill="url(#uH)"/><circle cx="256.1" cy="403.6" r="6.9" fill="url(#uN)"/><circle cx="247.2" cy="428.2" r="6.4" fill="url(#uH)"/><circle cx="239.4" cy="423.3" r="6.9" fill="url(#uC)"/><circle cx="225.6" cy="431.2" r="8.4" fill="url(#uO)"/><circle cx="235.4" cy="439" r="6.4" fill="url(#uN)"/><circle cx="220.7" cy="449.9" r="7.4" fill="url(#uH)"/><line x1="377.7" y1="378.3" x2="372.4" y2="385.0" stroke="#e8e8e8" stroke-width="5.2"/><line x1="372.4" y1="385.0" x2="367" y2="391.7" stroke="#0000e8" stroke-width="5.2"/><line x1="367" y1="391.7" x2="357.6" y2="403.1" stroke="#0000e8" stroke-width="5.2"/><line x1="357.6" y1="403.1" x2="348.3" y2="414.5" stroke="#787878" stroke-width="5.2"/><line x1="348.3" y1="414.5" x2="345.0" y2="419.1" stroke="#787878" stroke-width="5.2"/><line x1="345.0" y1="419.1" x2="341.6" y2="423.8" stroke="#e80000" stroke-width="5.2"/><line x1="348.3" y1="414.5" x2="341.6" y2="423.9" stroke="#787878" stroke-width="5.2"/><line x1="341.6" y1="423.9" x2="334.9" y2="433.2" stroke="#0000e8" stroke-width="5.2"/><line x1="334.9" y1="433.2" x2="328.1" y2="439.2" stroke="#0000e8" stroke-width="5.2"/><line x1="328.1" y1="439.2" x2="321.4" y2="445.3" stroke="#e8e8e8" stroke-width="5.2"/><circle cx="377.7" cy="378.3" r="8.4" fill="url(#uH)"/><circle cx="367" cy="391.7" r="7.4" fill="url(#uN)"/><circle cx="348.3" cy="414.5" r="6.9" fill="url(#uC)"/><circle cx="341.6" cy="423.8" r="9.4" fill="url(#uO)"/><circle cx="334.9" cy="433.2" r="6.4" fill="url(#uN)"/><circle cx="321.4" cy="445.3" r="7.9" fill="url(#uH)"/><line x1="251" y1="460.7" x2="256.4" y2="469.5" stroke="#e8e8e8" stroke-width="5.2"/><line x1="256.4" y1="469.5" x2="261.8" y2="478.3" stroke="#0000e8" stroke-width="5.2"/><line x1="254" y1="491" x2="257.9" y2="484.6" stroke="#e8e8e8" stroke-width="5.2"/><line x1="257.9" y1="484.6" x2="261.8" y2="478.3" stroke="#0000e8" stroke-width="5.2"/><line x1="261.8" y1="478.3" x2="275.0" y2="483.6" stroke="#0000e8" stroke-width="5.2"/><line x1="275.0" y1="483.6" x2="288.1" y2="489" stroke="#787878" stroke-width="5.2"/><line x1="288.1" y1="489" x2="293.0" y2="483.1" stroke="#787878" stroke-width="5.2"/><line x1="293.0" y1="483.1" x2="297.9" y2="477.3" stroke="#e80000" stroke-width="5.2"/><line x1="288.1" y1="489" x2="295.5" y2="500.8" stroke="#787878" stroke-width="5.2"/><line x1="295.5" y1="500.8" x2="302.8" y2="512.5" stroke="#0000e8" stroke-width="5.2"/><line x1="302.8" y1="512.5" x2="297.4" y2="517.9" stroke="#0000e8" stroke-width="5.2"/><line x1="297.4" y1="517.9" x2="292" y2="523.2" stroke="#e8e8e8" stroke-width="5.2"/><line x1="302.8" y1="512.5" x2="312.6" y2="516.4" stroke="#0000e8" stroke-width="5.2"/><line x1="312.6" y1="516.4" x2="322.3" y2="520.3" stroke="#e8e8e8" stroke-width="5.2"/><circle cx="251" cy="460.7" r="8.2" fill="url(#uH)"/><circle cx="261.8" cy="478.3" r="7.4" fill="url(#uN)"/><circle cx="254" cy="491" r="8.4" fill="url(#uH)"/><circle cx="288.1" cy="489" r="7.4" fill="url(#uC)"/><circle cx="297.9" cy="477.3" r="7.9" fill="url(#uO)"/><circle cx="302.8" cy="512.5" r="7.4" fill="url(#uN)"/><circle cx="292" cy="523.2" r="8.9" fill="url(#uH)"/><circle cx="322.3" cy="520.3" r="8.4" fill="url(#uH)"/><line x1="189.4" y1="381.9" x2="316.1" y2="364.9" stroke="#d8d8d8" stroke-width="1.2"/><text x="263.8" y="462.8" font-family="Liberation Sans" font-size="9" fill="#d8d8d8">0</text><text x="363.8" y="463.5" font-family="Liberation Sans" font-size="9" fill="#d00000">A</text><text x="215.5" y="506" font-family="Liberation Sans" font-size="8.5" fill="#30c030">C</text></svg></div>

<div class="win" style="left:443px;top:296px;width:321px;height:245px"></div>
<div class="wt" style="left:446px;top:299px;width:315px;background:#808080;color:#cacaca"><span>BaTiO3 - 3D Viewer</span></div>
<div class="vp" style="left:446px;top:313px;width:314px;height:224px;background:#000"><svg class="a" style="left:1px;top:1px" width="312" height="222" viewBox="447 314 312 222"><defs><radialGradient id="bB" cx="0.5" cy="0.5" fx="0.42" fy="0.38" r="0.55"><stop offset="0" stop-color="#ffffff"/><stop offset="0.07" stop-color="#8080ff"/><stop offset="0.25" stop-color="#0000e0"/><stop offset="0.75" stop-color="#0000a0"/><stop offset="1" stop-color="#000030"/></radialGradient><radialGradient id="bR" cx="0.5" cy="0.5" fx="0.42" fy="0.38" r="0.55"><stop offset="0" stop-color="#ffffff"/><stop offset="0.07" stop-color="#ff8080"/><stop offset="0.25" stop-color="#ee0000"/><stop offset="0.75" stop-color="#b00000"/><stop offset="1" stop-color="#300000"/></radialGradient><linearGradient id="stub" x1="0" y1="0" x2="1" y2="0"><stop offset="0" stop-color="#a00000"/><stop offset="0.5" stop-color="#e00000"/><stop offset="1" stop-color="#900000"/></linearGradient></defs><g stroke="#d0d0d0" stroke-width="1.5"><line x1="525.8" y1="358" x2="592.3" y2="332.2"/><line x1="592.3" y1="332.2" x2="692.3" y2="352.6"/><line x1="692.3" y1="352.6" x2="645.1" y2="389.1"/><line x1="525.8" y1="358" x2="530" y2="466.6"/><line x1="692.3" y1="352.6" x2="676.2" y2="451.5"/><line x1="592.3" y1="332.2" x2="587.9" y2="426.5"/><line x1="530" y1="466.6" x2="632.2" y2="505.2"/><line x1="632.2" y1="505.2" x2="676.2" y2="451.5"/><line x1="676.2" y1="451.5" x2="587.9" y2="426.5"/><line x1="587.9" y1="426.5" x2="530" y2="466.6"/></g><circle cx="587.9" cy="426.5" r="12" fill="url(#bB)"/><circle cx="592.3" cy="332.2" r="14" fill="url(#bB)"/><circle cx="692.3" cy="352.6" r="16" fill="url(#bB)"/><circle cx="676.2" cy="451.5" r="14" fill="url(#bB)"/><polygon points="599.4,369.3 626.2,372.5 640,378 650.9,412.3 644.5,438 618.7,450.9 595.1,448.8 570.4,415.5 567.2,403.7 582.2,380" fill="#c8006e"/><polygon points="601,371 626.2,372.5 640,378 650.9,412.3 644.5,430 598,432 588,414 596,380" fill="#e00580"/><polygon points="588,414 598,432 644.5,430 644.5,438 618.7,450.9 595.1,448.8 570.4,415.5" fill="#b0005f"/><polygon points="582.2,380 596,380 588,414 570.4,415.5 567.2,403.7" fill="#c4006c"/><g stroke="#d8d8d8" stroke-width="1.5"><line x1="645.1" y1="389.1" x2="525.8" y2="358"/><line x1="645.1" y1="389.1" x2="632.2" y2="505.2"/></g><line x1="615.7" y1="324" x2="615.7" y2="345" stroke="#c00000" stroke-width="12"/><circle cx="613.8" cy="355.8" r="17" fill="url(#bR)"/><line x1="537.6" y1="391.5" x2="552" y2="392" stroke="#c00000" stroke-width="8.5"/><circle cx="561.2" cy="396.6" r="13" fill="url(#bR)"/><line x1="559.5" y1="448.5" x2="572" y2="438" stroke="#c00000" stroke-width="10"/><circle cx="579.4" cy="433.3" r="17.6" fill="url(#bR)"/><line x1="605.3" y1="485" x2="605.5" y2="472" stroke="#c00000" stroke-width="8.5"/><circle cx="607.4" cy="461.2" r="14.5" fill="url(#bR)"/><line x1="692" y1="434.5" x2="678" y2="431" stroke="#c00000" stroke-width="10"/><circle cx="664.4" cy="426.8" r="16.6" fill="url(#bR)"/><circle cx="525.8" cy="358" r="17.7" fill="url(#bB)"/><circle cx="530" cy="466.6" r="16" fill="url(#bB)"/><circle cx="632.2" cy="505.2" r="17" fill="url(#bB)"/><circle cx="645.1" cy="389.1" r="21" fill="url(#bB)"/></svg></div>
<div class="btn" style="left:401px;top:56px;width:11px;height:10px"></div><svg class="a" style="left:401px;top:56px" width="11" height="10" viewBox="0 0 11 10"><rect x="3.0" y="6" width="5" height="1.6" fill="#000"/></svg><div class="btn" style="left:413px;top:56px;width:11px;height:10px"></div><svg class="a" style="left:413px;top:56px" width="11" height="10" viewBox="0 0 11 10"><rect x="2.0" y="1.5" width="7" height="6.5" fill="none" stroke="#000" stroke-width="1"/><rect x="1.5" y="1" width="8" height="2" fill="#000"/></svg><div class="btn" style="left:426px;top:56px;width:12px;height:10px"></div><svg class="a" style="left:426px;top:56px" width="12" height="10" viewBox="0 0 12 10"><path d="M3.2 2L8.8 7M8.8 2L3.2 7" stroke="#000" stroke-width="1.4"/></svg><svg class="a" style="left:127px;top:55.5px" width="11" height="10" viewBox="0 0 11 10">
<circle cx="2" cy="1.5" r="1.2" fill="#2040ff"/><circle cx="6" cy="1.2" r="1.1" fill="#4060ff"/><circle cx="1.5" cy="5" r="1.2" fill="#2080ff"/>
<circle cx="5" cy="4.5" r="1.6" fill="#30b0ff"/><circle cx="8" cy="3.5" r="1.2" fill="#d0d0c0"/><circle cx="4" cy="7.5" r="1.3" fill="#e0e0d0"/>
<circle cx="8" cy="7" r="1.3" fill="#2040ff"/><circle cx="9.5" cy="5.5" r="1" fill="#4080ff"/><circle cx="6.5" cy="9" r="0.9" fill="#2020c0"/></svg><div class="btn" style="left:721px;top:56px;width:11px;height:10px"></div><svg class="a" style="left:721px;top:56px" width="11" height="10" viewBox="0 0 11 10"><rect x="3.0" y="6" width="5" height="1.6" fill="#000"/></svg><div class="btn" style="left:733px;top:56px;width:11px;height:10px"></div><svg class="a" style="left:733px;top:56px" width="11" height="10" viewBox="0 0 11 10"><rect x="2.0" y="1.5" width="7" height="6.5" fill="none" stroke="#000" stroke-width="1"/><rect x="1.5" y="1" width="8" height="2" fill="#000"/></svg><div class="btn" style="left:746px;top:56px;width:12px;height:10px"></div><svg class="a" style="left:746px;top:56px" width="12" height="10" viewBox="0 0 12 10"><path d="M3.2 2L8.8 7M8.8 2L3.2 7" stroke="#000" stroke-width="1.4"/></svg><svg class="a" style="left:447px;top:55.5px" width="11" height="10" viewBox="0 0 11 10">
<circle cx="2" cy="1.5" r="1.2" fill="#2040ff"/><circle cx="6" cy="1.2" r="1.1" fill="#4060ff"/><circle cx="1.5" cy="5" r="1.2" fill="#2080ff"/>
<circle cx="5" cy="4.5" r="1.6" fill="#30b0ff"/><circle cx="8" cy="3.5" r="1.2" fill="#d0d0c0"/><circle cx="4" cy="7.5" r="1.3" fill="#e0e0d0"/>
<circle cx="8" cy="7" r="1.3" fill="#2040ff"/><circle cx="9.5" cy="5.5" r="1" fill="#4080ff"/><circle cx="6.5" cy="9" r="0.9" fill="#2020c0"/></svg><div class="btn" style="left:401px;top:301px;width:11px;height:10px"></div><svg class="a" style="left:401px;top:301px" width="11" height="10" viewBox="0 0 11 10"><rect x="3.0" y="6" width="5" height="1.6" fill="#000"/></svg><div class="btn" style="left:413px;top:301px;width:11px;height:10px"></div><svg class="a" style="left:413px;top:301px" width="11" height="10" viewBox="0 0 11 10"><rect x="2.0" y="1.5" width="7" height="6.5" fill="none" stroke="#000" stroke-width="1"/><rect x="1.5" y="1" width="8" height="2" fill="#000"/></svg><div class="btn" style="left:426px;top:301px;width:12px;height:10px"></div><svg class="a" style="left:426px;top:301px" width="12" height="10" viewBox="0 0 12 10"><path d="M3.2 2L8.8 7M8.8 2L3.2 7" stroke="#000" stroke-width="1.4"/></svg><svg class="a" style="left:127px;top:300.5px" width="11" height="10" viewBox="0 0 11 10">
<circle cx="2" cy="1.5" r="1.2" fill="#2040ff"/><circle cx="6" cy="1.2" r="1.1" fill="#4060ff"/><circle cx="1.5" cy="5" r="1.2" fill="#2080ff"/>
<circle cx="5" cy="4.5" r="1.6" fill="#30b0ff"/><circle cx="8" cy="3.5" r="1.2" fill="#d0d0c0"/><circle cx="4" cy="7.5" r="1.3" fill="#e0e0d0"/>
<circle cx="8" cy="7" r="1.3" fill="#2040ff"/><circle cx="9.5" cy="5.5" r="1" fill="#4080ff"/><circle cx="6.5" cy="9" r="0.9" fill="#2020c0"/></svg><div class="btn" style="left:721px;top:301px;width:11px;height:10px"></div><svg class="a" style="left:721px;top:301px" width="11" height="10" viewBox="0 0 11 10"><rect x="3.0" y="6" width="5" height="1.6" fill="#000"/></svg><div class="btn" style="left:733px;top:301px;width:11px;height:10px"></div><svg class="a" style="left:733px;top:301px" width="11" height="10" viewBox="0 0 11 10"><rect x="2.0" y="1.5" width="7" height="6.5" fill="none" stroke="#000" stroke-width="1"/><rect x="1.5" y="1" width="8" height="2" fill="#000"/></svg><div class="btn" style="left:746px;top:301px;width:12px;height:10px"></div><svg class="a" style="left:746px;top:301px" width="12" height="10" viewBox="0 0 12 10"><path d="M3.2 2L8.8 7M8.8 2L3.2 7" stroke="#000" stroke-width="1.4"/></svg><svg class="a" style="left:447px;top:300.5px" width="11" height="10" viewBox="0 0 11 10">
<circle cx="2" cy="1.5" r="1.2" fill="#2040ff"/><circle cx="6" cy="1.2" r="1.1" fill="#4060ff"/><circle cx="1.5" cy="5" r="1.2" fill="#2080ff"/>
<circle cx="5" cy="4.5" r="1.6" fill="#30b0ff"/><circle cx="8" cy="3.5" r="1.2" fill="#d0d0c0"/><circle cx="4" cy="7.5" r="1.3" fill="#e0e0d0"/>
<circle cx="8" cy="7" r="1.3" fill="#2040ff"/><circle cx="9.5" cy="5.5" r="1" fill="#4080ff"/><circle cx="6.5" cy="9" r="0.9" fill="#2020c0"/></svg>
<!-- left panels -->
<div class="a" style="left:3px;top:54px;width:104px;height:13px;background:#000080"></div>
<div class="t" style="left:5px;top:56px;color:#fff">Modules</div>
<div class="a" style="left:3px;top:86px;width:113px;height:210px;background:#fff;border-top:1px solid #808080;border-left:1px solid #808080;border-right:1px solid #fff;border-bottom:1px solid #fff;box-shadow:inset 1px 1px 0 #000"></div>
<div class="a" style="left:3px;top:300px;width:104px;height:13px;background:#808080"></div>
<div class="t" style="left:5px;top:302px;color:#d4d4d4">Project</div>
<div class="a" style="left:3px;top:332px;width:113px;height:210px;background:#fff;border-top:1px solid #808080;border-left:1px solid #808080;border-right:1px solid #fff;border-bottom:1px solid #fff;box-shadow:inset 1px 1px 0 #000"></div>
<svg class="a" style="left:0;top:0" width="120" height="559" viewBox="0 0 120 559"><path d="M111 58l4 4.5M115 58l-4 4.5" stroke="#000" stroke-width="1.2"/><path d="M111 304l4 4.5M115 304l-4 4.5" stroke="#000" stroke-width="1.2"/><g opacity="1"><path d="M6 74.5h6l2-2h3v3l-2 2v5h-9z" fill="none" stroke="#fff" stroke-width="1.6"/><path d="M6 74.5h6l2-2h3v3l-2 2v5h-9zM8.5 77h4v3h-4z" fill="none" stroke="#9a9a9a" stroke-width="0.8"/></g><rect x="22.5" y="69.5" width="1" height="14" fill="#909090"/><rect x="23.5" y="69.5" width="1" height="14" fill="#fff"/><circle cx="35" cy="76.5" r="5.2" fill="none" stroke="#fff" stroke-width="1.5"/><circle cx="34.6" cy="76" r="5" fill="none" stroke="#9a9a9a" stroke-width="0.9"/><path d="M34.5 75v3.5" stroke="#9a9a9a" stroke-width="1.2"/><circle cx="34.8" cy="73" r=".7" fill="#9a9a9a"/><path d="M46 72l5 1v8l-5-1zM57 72l-5 1v8l5-1z" fill="#f8f0c0" stroke="#206020" stroke-width="0.9"/><path d="M46 80l5 1.2 5.5-1.2v1.5l-5.5 1-5-1z" fill="#20a040"/><path d="M51.5 73v8" stroke="#206020" stroke-width="0.8"/><path d="M6.5 317.5h5.5l3 3v7h-8.5z" fill="#fff" stroke="#404040" stroke-width="1"/><path d="M7 327.5l7.5-6v6z" fill="#e8e4b0"/><path d="M12 317.5v3h3" fill="none" stroke="#404040"/><path d="M23 321.5h4l-2 2.5z" fill="#000"/><path d="M32.5 319.5h4l1 1.5h5.5v7h-10.5z" fill="#d8d088" stroke="#606030"/><path d="M33 327.5l2-5h9l-2 5z" fill="#f0e8a0" stroke="#808040" stroke-width="0.8"/><path d="M50.5 318l9 9.5M59.5 318l-9 9.5" stroke="#e82020" stroke-width="1.4"/><rect x="66.5" y="316" width="1" height="14" fill="#909090"/><rect x="67.5" y="316" width="1" height="14" fill="#fff"/><path d="M73 318l5 1v8l-5-1zM84 318l-5 1v8l5-1z" fill="#f8f0c0" stroke="#206020" stroke-width="0.9"/><path d="M73 326l5 1.2 5.5-1.2v1.5l-5.5 1-5-1z" fill="#20a040"/><path d="M78.5 319v8" stroke="#206020" stroke-width="0.8"/><path d="M10.5 97V167" stroke="#a0a0a0" stroke-width="0.8" stroke-dasharray="1 1"/><path d="M25.5 111V142" stroke="#a0a0a0" stroke-width="0.8" stroke-dasharray="1 1"/><path d="M25.5 171V226.5" stroke="#a0a0a0" stroke-width="0.8" stroke-dasharray="1 1"/><path d="M14 94.3H19" stroke="#a0a0a0" stroke-width="0.8" stroke-dasharray="1 1"/><rect x="7.5" y="91.3" width="6.5" height="6.5" fill="#fff" stroke="#808080" stroke-width="0.8"/><path d="M9.0 94.55h3.5" stroke="#000" stroke-width="0.9"/><path d="M10.75 92.8v3.5" stroke="#000" stroke-width="0.9"/><path d="M20 92.8l3-2.5h7v7l-3 2.5h-7z" fill="#3a90f0" stroke="#1040a0" stroke-width="0.6"/><path d="M20 92.8h7v7h-7z" fill="#50a8ff" stroke="#1040a0" stroke-width="0.6"/><path d="M27 92.8l3-2.5v7l-3 2.5z" fill="#1860d0"/><path d="M14 106.35H19" stroke="#a0a0a0" stroke-width="0.8" stroke-dasharray="1 1"/><rect x="7.5" y="103.35" width="6.5" height="6.5" fill="#fff" stroke="#808080" stroke-width="0.8"/><path d="M9.0 106.6h3.5" stroke="#000" stroke-width="0.9"/><circle cx="22.5" cy="101.35" r="1.8" fill="#e02020"/><circle cx="27.5" cy="101.35" r="1.8" fill="#e02020"/><circle cx="25" cy="102.35" r="1.3" fill="#fff"/><path d="M20 104.85l3-2.5h7v7l-3 2.5h-7z" fill="#3a90f0" stroke="#1040a0" stroke-width="0.6"/><path d="M20 104.85h7v7h-7z" fill="#50a8ff" stroke="#1040a0" stroke-width="0.6"/><path d="M27 104.85l3-2.5v7l-3 2.5z" fill="#1860d0"/><path d="M25.5 118.4H33" stroke="#a0a0a0" stroke-width="0.8" stroke-dasharray="1 1"/><circle cx="36" cy="121.4" r="1.8" fill="#2060ff"/><circle cx="43" cy="114.9" r="1.8" fill="#2060ff"/><path d="M37 119.9l1.5-1 .5 1.5 1.5-1 .5 1.5 1.5-2" fill="none" stroke="#000" stroke-width="0.7"/><path d="M25.5 130.45H33" stroke="#a0a0a0" stroke-width="0.8" stroke-dasharray="1 1"/><path d="M35 125.44999999999999c0 6 2 9 4.5 9s4.5-3 4.5-9" fill="none" stroke="#202020" stroke-width="0.8"/><circle cx="36.5" cy="127.94999999999999" r="1.6" fill="#2060ff"/><path d="M37 129.95v3" stroke="#2060ff" stroke-width=".7"/><path d="M25.5 142.5H33" stroke="#a0a0a0" stroke-width="0.8" stroke-dasharray="1 1"/><circle cx="37" cy="141.5" r="1.6" fill="#2060ff"/><circle cx="41" cy="140.5" r="1.6" fill="#2060ff"/><circle cx="39" cy="144.0" r="1.6" fill="#2060ff"/><path d="M34 147.5l2-2M44 147.5l-2-2M39 137.5v-1" stroke="#000" stroke-width="0.8"/><path d="M14 154.55H19" stroke="#a0a0a0" stroke-width="0.8" stroke-dasharray="1 1"/><rect x="7.5" y="151.55" width="6.5" height="6.5" fill="#fff" stroke="#808080" stroke-width="0.8"/><path d="M9.0 154.8h3.5" stroke="#000" stroke-width="0.9"/><path d="M10.75 153.05v3.5" stroke="#000" stroke-width="0.9"/><path d="M20 153.05l3-2.5h7v7l-3 2.5h-7z" fill="#3a90f0" stroke="#1040a0" stroke-width="0.6"/><path d="M20 153.05h7v7h-7z" fill="#50a8ff" stroke="#1040a0" stroke-width="0.6"/><path d="M27 153.05l3-2.5v7l-3 2.5z" fill="#1860d0"/><path d="M14 166.60000000000002H19" stroke="#a0a0a0" stroke-width="0.8" stroke-dasharray="1 1"/><rect x="7.5" y="163.60000000000002" width="6.5" height="6.5" fill="#fff" stroke="#808080" stroke-width="0.8"/><path d="M9.0 166.85000000000002h3.5" stroke="#000" stroke-width="0.9"/><circle cx="22.5" cy="161.60000000000002" r="1.8" fill="#e02020"/><circle cx="27.5" cy="161.60000000000002" r="1.8" fill="#e02020"/><circle cx="25" cy="162.60000000000002" r="1.3" fill="#fff"/><path d="M20 165.10000000000002l3-2.5h7v7l-3 2.5h-7z" fill="#3a90f0" stroke="#1040a0" stroke-width="0.6"/><path d="M20 165.10000000000002h7v7h-7z" fill="#50a8ff" stroke="#1040a0" stroke-width="0.6"/><path d="M27 165.10000000000002l3-2.5v7l-3 2.5z" fill="#1860d0"/><path d="M25.5 178.65H33" stroke="#a0a0a0" stroke-width="0.8" stroke-dasharray="1 1"/><path d="M35 176.65l3-2h6v7l-3 2h-6z" fill="#e0f0e0" stroke="#108030" stroke-width="0.9"/><path d="M38 178.65h3v3" fill="none" stroke="#108030" stroke-width="0.8"/><path d="M25.5 190.7H33" stroke="#a0a0a0" stroke-width="0.8" stroke-dasharray="1 1"/><path d="M35 185.7c0 6 2 9 4.5 9s4.5-3 4.5-9" fill="none" stroke="#202020" stroke-width="0.8"/><circle cx="36.5" cy="188.2" r="1.6" fill="#2060ff"/><path d="M37 190.2v3" stroke="#2060ff" stroke-width=".7"/><path d="M25.5 202.75H33" stroke="#a0a0a0" stroke-width="0.8" stroke-dasharray="1 1"/><circle cx="37" cy="201.75" r="1.6" fill="#2060ff"/><circle cx="41" cy="200.75" r="1.6" fill="#2060ff"/><circle cx="39" cy="204.25" r="1.6" fill="#2060ff"/><path d="M34 207.75l2-2M44 207.75l-2-2M39 197.75v-1" stroke="#000" stroke-width="0.8"/><path d="M25.5 214.8H33" stroke="#a0a0a0" stroke-width="0.8" stroke-dasharray="1 1"/><path d="M35 212.8l3-2h6v7l-3 2h-6z" fill="#e0f0e0" stroke="#108030" stroke-width="0.9"/><path d="M38 214.8h3v3" fill="none" stroke="#108030" stroke-width="0.8"/><path d="M25.5 226.85000000000002H33" stroke="#a0a0a0" stroke-width="0.8" stroke-dasharray="1 1"/><rect x="34" y="222.85000000000002" width="10" height="9" fill="#fff" stroke="#404040" stroke-width="0.7"/><circle cx="38.5" cy="226.35000000000002" r="2.6" fill="none" stroke="#d00000" stroke-width="1"/><path d="M40.5 228.35000000000002l2.5 2.5" stroke="#000" stroke-width="1.2"/><path d="M10.5 345V349" stroke="#a0a0a0" stroke-width="0.8" stroke-dasharray="1 1"/><path d="M25.5 357V399" stroke="#a0a0a0" stroke-width="0.8" stroke-dasharray="1 1"/><rect x="5" y="333.9" width="11" height="11" fill="#3030a0"/><g fill="#fff"><rect x="6.0" y="334.9" width="2.6" height="2.6" fill="#8080ff"/><rect x="6.0" y="338.2" width="2.6" height="2.6" fill="#fff"/><rect x="6.0" y="341.5" width="2.6" height="2.6" fill="#60a0ff"/><rect x="9.3" y="334.9" width="2.6" height="2.6" fill="#000"/><rect x="9.3" y="338.2" width="2.6" height="2.6" fill="#8080ff"/><rect x="9.3" y="341.5" width="2.6" height="2.6" fill="#60c0ff"/><rect x="12.6" y="334.9" width="2.6" height="2.6" fill="#8080ff"/><rect x="12.6" y="338.2" width="2.6" height="2.6" fill="#60a0ff"/><rect x="12.6" y="341.5" width="2.6" height="2.6" fill="#4060ff"/></g><rect x="7.5" y="348.34999999999997" width="6.5" height="6.5" fill="#fff" stroke="#808080" stroke-width="0.8"/><path d="M9.0 351.59999999999997h3.5" stroke="#000" stroke-width="0.9"/><path d="M14 351.34999999999997H18.5" stroke="#a0a0a0" stroke-width="0.8" stroke-dasharray="1 1"/><rect x="18.5" y="347.84999999999997" width="7" height="8" fill="#e0e0a0" stroke="#606030" stroke-width="0.6"/><rect x="21" y="345.84999999999997" width="8" height="9" fill="#fff" stroke="#404080" stroke-width="0.7"/><rect x="21" y="345.84999999999997" width="8" height="1.6" fill="#2040c0"/><rect x="22.5" y="349.84999999999997" width="3" height="3" fill="#8080c0"/><path d="M25.5 363.29999999999995H33" stroke="#a0a0a0" stroke-width="0.8" stroke-dasharray="1 1"/><rect x="33" y="357.79999999999995" width="11" height="11" fill="#000080"/><rect x="34" y="358.79999999999995" width="9" height="9" fill="#fff"/><circle cx="36" cy="360.59999999999997" r="1.8" fill="#e02020"/><circle cx="40.5" cy="360.59999999999997" r="1.6" fill="#e02020"/><path d="M34 367.79999999999995l3-4 3 2 3-3" stroke="#202020" stroke-width="0.8" fill="none"/><rect x="34" y="362.79999999999995" width="2" height="3" fill="#2040ff"/><rect x="41" y="364.79999999999995" width="2" height="3" fill="#2040ff"/><path d="M25.5 375.25H33" stroke="#a0a0a0" stroke-width="0.8" stroke-dasharray="1 1"/><rect x="33" y="369.75" width="11" height="11" fill="#000080"/><rect x="34" y="370.75" width="9" height="9" fill="#fff"/><circle cx="36" cy="372.55" r="1.8" fill="#e02020"/><circle cx="40.5" cy="372.55" r="1.6" fill="#e02020"/><path d="M34 379.75l3-4 3 2 3-3" stroke="#202020" stroke-width="0.8" fill="none"/><rect x="34" y="374.75" width="2" height="3" fill="#2040ff"/><rect x="41" y="376.75" width="2" height="3" fill="#2040ff"/><path d="M25.5 387.2H33" stroke="#a0a0a0" stroke-width="0.8" stroke-dasharray="1 1"/><rect x="33" y="381.7" width="11" height="11" fill="#000080"/><rect x="34" y="382.7" width="9" height="9" fill="#fff"/><circle cx="36" cy="384.5" r="1.8" fill="#e02020"/><circle cx="40.5" cy="384.5" r="1.6" fill="#e02020"/><path d="M34 391.7l3-4 3 2 3-3" stroke="#202020" stroke-width="0.8" fill="none"/><rect x="34" y="386.7" width="2" height="3" fill="#2040ff"/><rect x="41" y="388.7" width="2" height="3" fill="#2040ff"/><path d="M25.5 399.15H33" stroke="#a0a0a0" stroke-width="0.8" stroke-dasharray="1 1"/><rect x="33" y="393.65" width="11" height="11" fill="#000080"/><rect x="34" y="394.65" width="9" height="9" fill="#fff"/><circle cx="36" cy="396.45" r="1.8" fill="#e02020"/><circle cx="40.5" cy="396.45" r="1.6" fill="#e02020"/><path d="M34 403.65l3-4 3 2 3-3" stroke="#202020" stroke-width="0.8" fill="none"/><rect x="34" y="398.65" width="2" height="3" fill="#2040ff"/><rect x="41" y="400.65" width="2" height="3" fill="#2040ff"/></svg><div class="a" style="left:33.5px;top:88.8px;width:24.5px;height:11px;background:#000080;outline:1px dotted #c0c000;outline-offset:-1px"></div><div class="t" style="left:34.5px;top:89.3px;color:#fff;">Reflex</div><div class="t" style="left:34.5px;top:101.35px;color:#000;">Discover</div><div class="t" style="left:48.5px;top:113.4px;color:#000;">Setup</div><div class="t" style="left:48.5px;top:125.44999999999999px;color:#000;">Minimizer</div><div class="t" style="left:48.5px;top:137.5px;color:#000;">Dynamics</div><div class="t" style="left:34.5px;top:149.55px;color:#000;">Samples</div><div class="t" style="left:34.5px;top:161.60000000000002px;color:#000;">Amorphous Cell</div><div class="t" style="left:48.5px;top:173.65px;color:#000;">Construct</div><div class="t" style="left:48.5px;top:185.7px;color:#000;">Minimize</div><div class="t" style="left:48.5px;top:197.75px;color:#000;">Dynamics</div><div class="t" style="left:48.5px;top:209.8px;color:#000;">Protocols</div><div class="t" style="left:48.5px;top:221.85000000000002px;color:#000;">Analysis</div><div class="t" style="left:20.5px;top:334.4px;color:#000;">PROJECT</div><div class="t" style="left:34.5px;top:346.34999999999997px;color:#000;">Miscellaneous</div><div class="t" style="left:48.5px;top:358.29999999999995px;color:#000;">BaTiO3</div><div class="t" style="left:48.5px;top:370.25px;color:#000;">TON</div><div class="t" style="left:48.5px;top:382.2px;color:#000;">urea</div><div class="a" style="left:47px;top:393.6px;width:17.5px;height:11px;background:#c0c0c0"></div><div class="t" style="left:48.5px;top:394.15px;color:#000;">C60</div>
<!-- status bar -->
<div class="a" style="left:0;top:556px;width:768px;height:1px;background:#ececec"></div>
<div class="t" style="left:2px;top:545px">Ready</div>
<div class="pane" style="left:594px;width:100px"></div>
<div class="pane" style="left:696px;width:19px"></div>
<div class="pane" style="left:717px;width:23px"></div>
<div class="pane" style="left:742px;width:26px"></div>
</body></html>
